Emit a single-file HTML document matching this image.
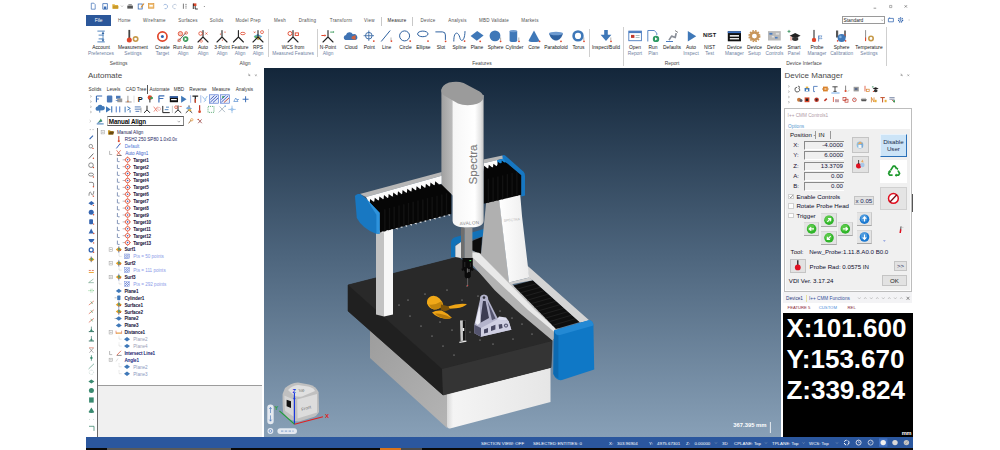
<!DOCTYPE html>
<html lang="en"><head><meta charset="utf-8"><title>Verisurf</title>
<style>
html,body{margin:0;padding:0;background:#fff;}
body{width:1000px;height:450px;overflow:hidden;position:relative;font-family:"Liberation Sans",sans-serif;color:#2a2a2a;}
.a{position:absolute;white-space:nowrap;}
.t{position:absolute;white-space:nowrap;line-height:1;transform:translate(-50%,-50%);text-align:center;}
.l{position:absolute;white-space:nowrap;line-height:1;transform:translate(0,-50%);}
.r{position:absolute;white-space:nowrap;line-height:1;transform:translate(-100%,-50%);}
svg{position:absolute;overflow:visible;}
</style></head>
<body>
<svg style="left:0px;top:0px" width="1000" height="14" viewBox="0 0 1000 14"><path d="M91.3 3.2h2.6l1.3 1.4v4.6h-3.9z" fill="none" stroke="#3b6db5" stroke-width=".7"/><path d="M102.8 3.6h4.6v5.6h-4.600z" fill="none" stroke="#3b6db5" stroke-width=".8"/><rect x="103.9" y="6.5" width="2.4" height="2.5" fill="#3b6db5"/><path d="M112.3 4.2h2.2l.6.8h2.9v3.8h-5.7z" fill="#e3b341"/><rect x="113" y="5.8" width="5.4" height="2.8" fill="#c99a2a"/><path d="M121 5.6l1 1 1-1" fill="none" stroke="#777" stroke-width=".5"/><rect x="127.3" y="5.6" width="5.6" height="3" fill="#555"/><rect x="128.4" y="4" width="3.4" height="1.8" fill="#999"/><rect x="138.2" y="4" width="4" height="5" fill="none" stroke="#3b6db5" stroke-width=".8"/><path d="M141 7.5l3-4" stroke="#e08a1e" stroke-width="1.1"/><rect x="148.3" y="3.6" width="5.6" height="4.6" fill="#f0c27a" stroke="#d98c2b" stroke-width=".6"/><rect x="149.4" y="5" width="3.4" height="1.6" fill="#fff"/><path d="M163.6 5.2a2.2 2.2 0 1 1 1 3.4" fill="none" stroke="#9db7dc" stroke-width=".9"/><path d="M176.6 5.2a2.2 2.2 0 1 0 -1 3.4" fill="none" stroke="#b9c6da" stroke-width=".9"/><path d="M183.4 3.6v5.2M185.4 4.4h1.2M185.4 6.2h1.2M185.4 8h1.2" stroke="#444" stroke-width=".7"/><rect x="193" y="3.4" width="3.4" height="2.6" fill="#d9482b"/><path d="M193.3 3.6v5.4M195.2 6v3h2.6" stroke="#222" stroke-width=".9" fill="none"/><circle cx="204.3" cy="6.6" r=".5" fill="#666"/></svg>
<svg style="left:0px;top:0px" width="1000" height="14" viewBox="0 0 1000 14"><path d="M873.6 8.2h2.6" stroke="#555" stroke-width=".6"/><path d="M889.6 5.4h2.2v2.2h-2.2z" fill="none" stroke="#666" stroke-width=".5"/><path d="M904.6 5.2l2.4 2.4M907 5.2l-2.4 2.4" stroke="#555" stroke-width=".6"/></svg>
<div class="a" style="left:86px;top:15px;width:25px;height:11px;background:#2b579a;"></div>
<div class="t" style="left:98.6px;top:21.2px;font-size:4.9px;color:#fff;">File</div>
<div class="t" style="left:124.4px;top:21.2px;font-size:4.5px;color:#505050;letter-spacing:.22px;">Home</div>
<div class="t" style="left:154.4px;top:21.2px;font-size:4.5px;color:#505050;letter-spacing:.22px;">Wireframe</div>
<div class="t" style="left:188px;top:21.2px;font-size:4.5px;color:#505050;letter-spacing:.22px;">Surfaces</div>
<div class="t" style="left:216.6px;top:21.2px;font-size:4.5px;color:#505050;letter-spacing:.22px;">Solids</div>
<div class="t" style="left:248px;top:21.2px;font-size:4.5px;color:#505050;letter-spacing:.22px;">Model Prep</div>
<div class="t" style="left:280px;top:21.2px;font-size:4.5px;color:#505050;letter-spacing:.22px;">Mesh</div>
<div class="t" style="left:307.5px;top:21.2px;font-size:4.5px;color:#505050;letter-spacing:.22px;">Drafting</div>
<div class="t" style="left:341px;top:21.2px;font-size:4.5px;color:#505050;letter-spacing:.22px;">Transform</div>
<div class="t" style="left:369.4px;top:21.2px;font-size:4.5px;color:#505050;letter-spacing:.22px;">View</div>
<div class="t" style="left:397px;top:21.2px;font-size:4.5px;color:#222;letter-spacing:.22px;">Measure</div>
<div class="t" style="left:428px;top:21.2px;font-size:4.5px;color:#505050;letter-spacing:.22px;">Device</div>
<div class="t" style="left:457.5px;top:21.2px;font-size:4.5px;color:#505050;letter-spacing:.22px;">Analysis</div>
<div class="t" style="left:494px;top:21.2px;font-size:4.5px;color:#505050;letter-spacing:.22px;">MBD Validate</div>
<div class="t" style="left:530px;top:21.2px;font-size:4.5px;color:#505050;letter-spacing:.22px;">Markets</div>
<div class="a" style="left:381.4px;top:16.5px;width:0.6px;height:9.5px;background:#c8c8c8;"></div>
<div class="a" style="left:412.2px;top:16.5px;width:0.6px;height:9.5px;background:#c8c8c8;"></div>
<div class="a" style="left:842px;top:16.2px;width:43px;height:7.6px;background:#fff;border:.6px solid #9a9a9a;box-sizing:border-box;"></div>
<div class="l" style="left:843.4px;top:20.8px;font-size:4.9px;color:#222;">Standard</div>
<svg style="left:0px;top:0px" width="1000" height="30" viewBox="0 0 1000 30"><path d="M881.3 19.6l.9 1 .9-1" fill="none" stroke="#666" stroke-width=".5"/><path d="M888.4 18.4h5v3.4h-5zM889.6 18.4v-1" fill="none" stroke="#3b6db5" stroke-width=".8"/><circle cx="900.6" cy="20" r="2" fill="none" stroke="#2f62ad" stroke-width="1.4" stroke-dasharray="1 .6"/><circle cx="900.6" cy="20" r=".7" fill="#2f62ad"/><path d="M908.4 20h1.6" stroke="#aaa" stroke-width=".5"/></svg>
<div class="a" style="left:268px;top:29px;width:0.6px;height:28px;background:#cfcfcf;"></div>
<div class="a" style="left:316.6px;top:29px;width:0.6px;height:28px;background:#cfcfcf;"></div>
<div class="a" style="left:588.6px;top:29px;width:0.6px;height:28px;background:#cfcfcf;"></div>
<div class="a" style="left:623.4px;top:27px;width:0.6px;height:38.5px;background:#cfcfcf;"></div>
<div class="a" style="left:886.4px;top:27px;width:0.6px;height:38.5px;background:#cfcfcf;"></div>
<svg style="left:0px;top:0px" width="1000" height="60" viewBox="0 0 1000 60"><path d="M97.4 31.1h7.4M97.4 41.9h7.4M98.6 35.1h5M98.6 38.9h5" stroke="#3f78b8" stroke-width=".9"/><path d="M103 31.5v10" stroke="#3f78b8" stroke-width=".8"/><path d="M101.6 33.9l1.4-2 1.4 2zM101.6 39.5l1.4 2 1.4-2z" fill="#2f62a0"/><rect x="128.4" y="29.9" width="1.8" height="9" fill="#444"/><circle cx="129.3" cy="40.1" r="2.5" fill="#e0452a"/><circle cx="135.6" cy="39.1" r="2.2" fill="none" stroke="#c69a4a" stroke-width="1.6"/><circle cx="162.4" cy="36.5" r="4.6" fill="#fff" stroke="#e0452a" stroke-width="1.7"/><circle cx="162.4" cy="36.5" r="1.5" fill="#2f62ad"/><path d="M178 41.5L186 32.5" stroke="#555" stroke-width=".9"/><circle cx="180.4" cy="33.7" r="2.2" fill="#f4c7bd" stroke="#e0452a" stroke-width=".8"/><circle cx="186.2" cy="32.9" r="1.3" fill="none" stroke="#e0452a" stroke-width=".7"/><circle cx="185.6" cy="39.1" r="2.8" fill="#3a9a5a"/><path d="M184.6 37.5v3.2l2.6-1.6z" fill="#fff"/><circle cx="179.2" cy="40.3" r="1.3" fill="none" stroke="#e0452a" stroke-width=".7"/><path d="M203 30.5V37.0M203 37.0L198 42.0M203 37.0L208 42.0" stroke="#222" stroke-width="1.1" fill="none" stroke-linecap="round"/><circle cx="200.6" cy="33.5" r="1.8" fill="none" stroke="#e0452a" stroke-width=".8"/><path d="M205.4 32.5l2 2M207.4 32.5l-2 2" stroke="#e0452a" stroke-width=".7"/><circle cx="201.2" cy="41.1" r="1.2" fill="none" stroke="#e0452a" stroke-width=".6"/><path d="M222 30.5V37.0M222 37.0L217 42.0M222 37.0L227 42.0" stroke="#222" stroke-width="1.1" fill="none" stroke-linecap="round"/><circle cx="225" cy="32.1" r="0.7" fill="#e0452a"/><circle cx="220.4" cy="34.1" r="0.6" fill="#e0452a"/><circle cx="222.4" cy="40.1" r="0.6" fill="#e0452a"/><path d="M238.4 30.5V37.0M238.4 37.0L233.4 42.0M238.4 37.0L243.4 42.0" stroke="#222" stroke-width="1.1" fill="none" stroke-linecap="round"/><ellipse cx="242.8" cy="33.5" rx="2.4" ry="1.2" fill="none" stroke="#e0452a" stroke-width=".8"/><path d="M253.6 36.5l4-2.6 4.6 2.4-4.2 4z" fill="#5aa7d8"/><path d="M256 37.5l3-1.4 2 2.4-3 1.4z" fill="#e8b13a"/><path d="M254.6 35.5l2 .6.4 2-2.2.2z" fill="#63b35d"/><path d="M258 30.5V37.0M258 37.0L253 42.0M258 37.0L263 42.0" stroke="#222" stroke-width="1.1" fill="none" stroke-linecap="round"/><circle cx="262" cy="32.1" r="1.5" fill="none" stroke="#e0452a" stroke-width=".7"/><path d="M253.8 31.5l1.6 1.6M255.4 31.5l-1.6 1.6" stroke="#e0452a" stroke-width=".6"/><path d="M293 30.5V37.0M293 37.0L288 42.0M293 37.0L298 42.0" stroke="#222" stroke-width="1.1" fill="none" stroke-linecap="round"/><circle cx="290" cy="33.5" r="2" fill="none" stroke="#e0452a" stroke-width=".9"/><rect x="295.2" y="32.9" width="3.2" height="2.6" fill="none" stroke="#e0452a" stroke-width=".9"/><path d="M328 30.5V37.0M328 37.0L323 42.0M328 37.0L333 42.0" stroke="#222" stroke-width="1.1" fill="none" stroke-linecap="round"/><path d="M321.4 35.5h3.4" stroke="#e0452a" stroke-width="1"/><path d="M324.6 34.3l1.6 1.2-1.6 1.2z" fill="#e0452a"/><path d="M330.2 32.1h3" stroke="#3a9a5a" stroke-width=".9"/><path d="M333 31.1l1.4 1-1.4 1z" fill="#3a9a5a"/><path d="M345.4 40.1a2.6 2.6 0 0 1 .6-5 3.6 3.6 0 0 1 6.8-.8 3 3 0 0 1 2.6 5.8z" fill="#3f73b3"/><path d="M351.6 36.7l4-1.6v5l-4-1.4z" fill="#d0623f"/><circle cx="368.79999999999995" cy="35.7" r="3.3" fill="none" stroke="#2f62a0" stroke-width=".9"/><path d="M368.79999999999995 30.5v10.4M363.59999999999997 35.7h10.4" stroke="#2f62a0" stroke-width=".8"/><circle cx="373.79999999999995" cy="41.1" r="0.9" fill="#e0452a"/><path d="M381.20000000000005 41.5L390.20000000000005 30.5" stroke="#2f62a0" stroke-width="1"/><path d="M391.0 37.5v3" stroke="#666" stroke-width=".5"/><circle cx="391.40000000000003" cy="41.1" r="0.9" fill="#e0452a"/><circle cx="404.59999999999997" cy="35.9" r="5" fill="none" stroke="#2f62a0" stroke-width="1"/><circle cx="410.2" cy="41.1" r="0.9" fill="#e0452a"/><ellipse cx="422.79999999999995" cy="33.9" rx="5.2" ry="2.8" fill="none" stroke="#2f62a0" stroke-width="1"/><circle cx="428.0" cy="41.1" r="0.9" fill="#e0452a"/><path d="M435.4 31.9h7a3 3 0 0 1 3 3v5" fill="none" stroke="#2f62a0" stroke-width="1"/><circle cx="445.6" cy="41.3" r="0.9" fill="#e0452a"/><path d="M453.79999999999995 41.5c0-12 5-9 6-4s5 4 5.2-6.4" fill="none" stroke="#2f62a0" stroke-width="1"/><circle cx="464.59999999999997" cy="41.1" r="0.9" fill="#e0452a"/><path d="M470.6 36.1l6.6-5.2 6.4 4.6-6.8 5.2z" fill="#3f78b8"/><circle cx="480.2" cy="41.3" r="0.9" fill="#e0452a"/><circle cx="495.0" cy="35.9" r="5.4" fill="#3f78b8"/><path d="M500.6 37.5v3" stroke="#666" stroke-width=".5"/><circle cx="500.6" cy="41.3" r="0.9" fill="#e0452a"/><path d="M509.59999999999997 31.1h7.6v9.6a3.8 1.4 0 0 1-7.6 0z" fill="#3f78b8"/><ellipse cx="513.4" cy="31.1" rx="3.8" ry="1.2" fill="#6e9bd0"/><path d="M518.8 37.5v3" stroke="#666" stroke-width=".5"/><circle cx="519.0" cy="41.3" r="0.9" fill="#e0452a"/><path d="M534 30.5l5.4 10a5.4 1.6 0 0 1-10.8 0z" fill="#3f78b8"/><circle cx="539.6" cy="41.3" r="0.9" fill="#e0452a"/><path d="M549 33.5c2 6 5 7 7 7s5-1 7-7z" fill="#2f62a0"/><ellipse cx="556" cy="33.5" rx="7" ry="1.7" fill="#6e9bd0"/><circle cx="561" cy="41.3" r="0.9" fill="#e0452a"/><circle cx="578.0" cy="35.9" r="4.4" fill="none" stroke="#3f78b8" stroke-width="2.6"/><path d="M583.8 37.5v3" stroke="#666" stroke-width=".5"/><circle cx="584.0" cy="41.3" r="0.9" fill="#e0452a"/><path d="M604.2 30.1h3.6v4.6h3.6l-5.4 6.4-5.4-6.4h3.6z" fill="#3f78b8"/><path d="M610.8 37.5v3" stroke="#666" stroke-width=".5"/><circle cx="611" cy="41.3" r="0.9" fill="#e0452a"/><rect x="628.8" y="31.1" width="12.6" height="9.6" fill="#fff" stroke="#4a7cc0" stroke-width=".9"/><rect x="628.8" y="31.1" width="12.6" height="2" fill="#4a7cc0"/><rect x="631" y="34.9" width="3.4" height="3" fill="#c0392b"/><path d="M635.6 35.5h4M635.6 37.5h4" stroke="#8aa" stroke-width=".7"/><path d="M647.8 41.5v-11h6.4l2.6 2.6v2" fill="none" stroke="#4a7cc0" stroke-width=".9"/><circle cx="656" cy="38.9" r="3.2" fill="#2e9a63"/><path d="M655 37.3v3.2l2.6-1.6z" fill="#fff"/><path d="M666 41.5h7" stroke="#4a7cc0" stroke-width="1"/><path d="M669 40.1l2.6-4 3.6 1.4 1-4.4" fill="none" stroke="#8a8f98" stroke-width="1.7" stroke-linejoin="round"/><path d="M675 30.5l3 2" stroke="#666" stroke-width=".8"/><path d="M687.8 30.9v10.6l8.4-5.3z" fill="#3f78b8"/><text x="709.6" y="36.9" font-size="5.6" font-weight="bold" text-anchor="middle" fill="#111" font-family="Liberation Sans,sans-serif" textLength="13">NIST</text><rect x="727.8" y="31.3" width="13.2" height="10" fill="#111"/><rect x="727.8" y="31.3" width="13.2" height="1.8" fill="#3a6fc0"/><rect x="729.8" y="35.1" width="9.2" height="1.5" fill="#fff"/><rect x="729.8" y="38.1" width="9.2" height="1.3" fill="#fff"/><circle cx="754.4" cy="36.1" r="3.7" fill="none" stroke="#c8965a" stroke-width="2.5"/><circle cx="754.4" cy="36.1" r="5.3" fill="none" stroke="#c8965a" stroke-width="1.5" stroke-dasharray="1.7 1.07"/><rect x="768.0" y="31.1" width="12.8" height="9.4" fill="#b9b9b9"/><rect x="769.4" y="32.9" width="3" height="1.8" fill="#4a7cc0"/><rect x="775.8" y="32.9" width="3.4" height="1.8" fill="#ddd"/><rect x="771.8" y="35.9" width="2.4" height="1.6" fill="#ddd"/><rect x="775.0" y="36.9" width="2.6" height="1.6" fill="#4a7cc0"/><path d="M789 29.9v3M787.5 31.4h3" stroke="#2e8b57" stroke-width=".8"/><path d="M789.6 35.7l5.6-2.6 5.4 2.6-5.4 2.6z" fill="#222"/><path d="M792.2 37.3v2.6c2 1.4 4 1.4 6 0v-2.6" fill="#333"/><path d="M791 36.5v4" stroke="#e0452a" stroke-width=".7"/><rect x="813.4" y="29.9" width="1.2" height="9" fill="#444"/><circle cx="814" cy="39.9" r="2.2" fill="#e0452a"/><path d="M818.6 35.5v6" stroke="#4a7cc0" stroke-width=".8"/><path d="M819 35.9h3l-1 1.4 1 1.4h-3z" fill="none" stroke="#4a7cc0" stroke-width=".6"/><rect x="836.0" y="30.5" width="2.2" height="7" fill="#555"/><rect x="844.2" y="30.5" width="1.6" height="7" fill="#555"/><circle cx="841.6" cy="38.1" r="4" fill="#3f78b8"/><circle cx="840.4" cy="36.9" r="1.3" fill="#7fb0e0"/><circle cx="837.6" cy="40.9" r="0.8" fill="#e0452a"/><circle cx="845.6" cy="40.9" r="0.8" fill="#e0452a"/><circle cx="845.0" cy="34.9" r="0.7" fill="#e0452a"/><rect x="865" y="30.1" width="1.1" height="9.6" fill="#999"/><rect x="865" y="37.5" width="1.1" height="3.6" fill="#e0452a"/><circle cx="871" cy="38.5" r="2.2" fill="none" stroke="#c69a4a" stroke-width="1.6"/></svg>
<div class="t" style="left:101px;top:47.9px;font-size:4.9px;color:#151515;">Account</div>
<div class="t" style="left:101px;top:53.8px;font-size:4.8px;color:#6f7fa2;">Preferences</div>
<div class="t" style="left:133px;top:47.9px;font-size:4.9px;color:#151515;">Measurement</div>
<div class="t" style="left:133px;top:53.8px;font-size:4.8px;color:#6f7fa2;">Settings</div>
<div class="t" style="left:162.4px;top:47.9px;font-size:4.9px;color:#151515;">Create</div>
<div class="t" style="left:162.4px;top:53.8px;font-size:4.8px;color:#6f7fa2;">Target</div>
<div class="t" style="left:183px;top:47.9px;font-size:4.9px;color:#151515;">Run Auto</div>
<div class="t" style="left:183px;top:53.8px;font-size:4.8px;color:#6f7fa2;">Align</div>
<div class="t" style="left:203px;top:47.9px;font-size:4.9px;color:#151515;">Auto</div>
<div class="t" style="left:203px;top:53.8px;font-size:4.8px;color:#6f7fa2;">Align</div>
<div class="t" style="left:222px;top:47.9px;font-size:4.9px;color:#151515;">3-Point</div>
<div class="t" style="left:222px;top:53.8px;font-size:4.8px;color:#6f7fa2;">Align</div>
<div class="t" style="left:240px;top:47.9px;font-size:4.9px;color:#151515;">Feature</div>
<div class="t" style="left:240px;top:53.8px;font-size:4.8px;color:#6f7fa2;">Align</div>
<div class="t" style="left:258px;top:47.9px;font-size:4.9px;color:#151515;">RPS</div>
<div class="t" style="left:258px;top:53.8px;font-size:4.8px;color:#6f7fa2;">Align</div>
<div class="t" style="left:293px;top:47.9px;font-size:4.9px;color:#151515;">WCS from</div>
<div class="t" style="left:293px;top:53.8px;font-size:4.8px;color:#6f7fa2;">Measured Features</div>
<div class="t" style="left:328px;top:47.9px;font-size:4.9px;color:#151515;">N-Point</div>
<div class="t" style="left:328px;top:53.8px;font-size:4.8px;color:#6f7fa2;">Align</div>
<div class="t" style="left:351px;top:47.9px;font-size:4.9px;color:#151515;">Cloud</div>
<div class="t" style="left:369.4px;top:47.9px;font-size:4.9px;color:#151515;">Point</div>
<div class="t" style="left:386.6px;top:47.9px;font-size:4.9px;color:#151515;">Line</div>
<div class="t" style="left:405.4px;top:47.9px;font-size:4.9px;color:#151515;">Circle</div>
<div class="t" style="left:423.4px;top:47.9px;font-size:4.9px;color:#151515;">Ellipse</div>
<div class="t" style="left:441px;top:47.9px;font-size:4.9px;color:#151515;">Slot</div>
<div class="t" style="left:459.4px;top:47.9px;font-size:4.9px;color:#151515;">Spline</div>
<div class="t" style="left:477px;top:47.9px;font-size:4.9px;color:#151515;">Plane</div>
<div class="t" style="left:495.6px;top:47.9px;font-size:4.9px;color:#151515;">Sphere</div>
<div class="t" style="left:514.4px;top:47.9px;font-size:4.9px;color:#151515;">Cylinder</div>
<div class="t" style="left:534px;top:47.9px;font-size:4.9px;color:#151515;">Cone</div>
<div class="t" style="left:556px;top:47.9px;font-size:4.9px;color:#151515;">Paraboloid</div>
<div class="t" style="left:578.4px;top:47.9px;font-size:4.9px;color:#151515;">Torus</div>
<div class="t" style="left:606px;top:47.9px;font-size:4.9px;color:#151515;">Inspect/Build</div>
<div class="t" style="left:635px;top:47.9px;font-size:4.9px;color:#151515;">Open</div>
<div class="t" style="left:635px;top:53.8px;font-size:4.8px;color:#6f7fa2;">Report</div>
<div class="t" style="left:653px;top:47.9px;font-size:4.9px;color:#151515;">Run</div>
<div class="t" style="left:653px;top:53.8px;font-size:4.8px;color:#6f7fa2;">Plan</div>
<div class="t" style="left:672px;top:47.9px;font-size:4.9px;color:#151515;">Defaults</div>
<div class="t" style="left:691px;top:47.9px;font-size:4.9px;color:#151515;">Auto</div>
<div class="t" style="left:691px;top:53.8px;font-size:4.8px;color:#6f7fa2;">Inspect</div>
<div class="t" style="left:709.6px;top:47.9px;font-size:4.9px;color:#151515;">NIST</div>
<div class="t" style="left:709.6px;top:53.8px;font-size:4.8px;color:#6f7fa2;">Test</div>
<div class="t" style="left:734.4px;top:47.9px;font-size:4.9px;color:#151515;">Device</div>
<div class="t" style="left:734.4px;top:53.8px;font-size:4.8px;color:#6f7fa2;">Manager</div>
<div class="t" style="left:754.4px;top:47.9px;font-size:4.9px;color:#151515;">Device</div>
<div class="t" style="left:754.4px;top:53.8px;font-size:4.8px;color:#6f7fa2;">Setup</div>
<div class="t" style="left:774.4px;top:47.9px;font-size:4.9px;color:#151515;">Device</div>
<div class="t" style="left:774.4px;top:53.8px;font-size:4.8px;color:#6f7fa2;">Controls</div>
<div class="t" style="left:794px;top:47.9px;font-size:4.9px;color:#151515;">Smart</div>
<div class="t" style="left:794px;top:53.8px;font-size:4.8px;color:#6f7fa2;">Panel</div>
<div class="t" style="left:817px;top:47.9px;font-size:4.9px;color:#151515;">Probe</div>
<div class="t" style="left:817px;top:53.8px;font-size:4.8px;color:#6f7fa2;">Manager</div>
<div class="t" style="left:841.6px;top:47.9px;font-size:4.9px;color:#151515;">Sphere</div>
<div class="t" style="left:841.6px;top:53.8px;font-size:4.8px;color:#6f7fa2;">Calibration</div>
<div class="t" style="left:869px;top:47.9px;font-size:4.9px;color:#151515;">Temperature</div>
<div class="t" style="left:869px;top:53.8px;font-size:4.8px;color:#6f7fa2;">Settings</div>
<div class="t" style="left:118.6px;top:63.8px;font-size:4.9px;color:#444;">Settings</div>
<div class="t" style="left:245px;top:63.8px;font-size:4.9px;color:#444;">Align</div>
<div class="t" style="left:482px;top:63.8px;font-size:4.9px;color:#444;">Features</div>
<div class="t" style="left:672px;top:63.8px;font-size:4.9px;color:#444;">Report</div>
<div class="t" style="left:804px;top:63.8px;font-size:4.9px;color:#444;">Device Interface</div>
<div class="l" style="left:88px;top:76.2px;font-size:8px;color:#4a4a4a;">Automate</div>
<svg style="left:0px;top:0px" width="1000" height="100" viewBox="0 0 1000 100"><path d="M248.6 73.6l1.2 2.6M248 75.2h2.4" stroke="#777" stroke-width=".5"/><path d="M255 74.4l1.8 1.8M256.8 74.4l-1.8 1.8" stroke="#777" stroke-width=".5"/></svg>
<div class="t" style="left:95px;top:90.2px;font-size:4.7px;color:#333;">Solids</div>
<div class="t" style="left:113.6px;top:90.2px;font-size:4.7px;color:#333;">Levels</div>
<div class="t" style="left:136px;top:90.2px;font-size:4.7px;color:#333;">CAD Tree</div>
<div class="t" style="left:159.6px;top:90.2px;font-size:4.7px;color:#333;">Automate</div>
<div class="t" style="left:179px;top:90.2px;font-size:4.7px;color:#333;">MBD</div>
<div class="t" style="left:198px;top:90.2px;font-size:4.7px;color:#333;">Reverse</div>
<div class="t" style="left:221px;top:90.2px;font-size:4.7px;color:#333;">Measure</div>
<div class="t" style="left:244.4px;top:90.2px;font-size:4.7px;color:#333;">Analysis</div>
<div class="a" style="left:147.4px;top:85px;width:0.7px;height:9.4px;background:#555;"></div>
<svg style="left:0px;top:0px" width="1000" height="130" viewBox="0 0 1000 130"><path d="M90 95.4l1.6 1-1.6 1M90 100.6l1.6 1-1.6 1" stroke="#8a8a8a" stroke-width=".45" fill="none"/><g transform="translate(99.3 99) scale(1.24) translate(-99.3 -99)"><path d="M97 96.6h4.6M97 96.6v5M97 99h2" fill="none" stroke="#3b6db5" stroke-width=".9"/></g><g transform="translate(109.6 99) scale(1.24) translate(-109.6 -99)"><rect x="107.4" y="96.2" width="4.4" height="5.6" rx=".8" fill="#4a78b8"/></g><g transform="translate(119 99) scale(1.24) translate(-119 -99)"><rect x="116.6" y="96.4" width="3.6" height="2.4" fill="#4a78b8"/><rect x="117.6" y="98.6" width="4" height="3" fill="#999"/><path d="M116.4 100.2h2" stroke="#4a78b8" stroke-width=".6"/></g><g transform="translate(128.4 99) scale(1.24) translate(-128.4 -99)"><path d="M128 96.4v4.4M126 101.4h5" stroke="#8a8a8a" stroke-width=".7"/><circle cx="128" cy="101" r=".7" fill="#c97b4a"/></g><path d="M134 95.6v7" stroke="#bbb" stroke-width=".5"/><g transform="translate(140.4 99) scale(1.24) translate(-140.4 -99)"><text x="138.2" y="101.4" font-size="6" font-weight="bold" fill="#111" font-family="Liberation Sans,sans-serif">P</text></g><g transform="translate(150.5 99) scale(1.24) translate(-150.5 -99)"><circle cx="150" cy="97.8" r="1.8" fill="#d9482b"/><circle cx="151.4" cy="98.2" r="1.1" fill="#3a9a5a"/><path d="M150 99v2.8" stroke="#222" stroke-width=".8"/></g><g transform="translate(161.4 99) scale(1.24) translate(-161.4 -99)"><path d="M159.4 96.4h4.4M159.4 96.4v5.4M159.4 98.6h3.6" fill="none" stroke="#3b6db5" stroke-width="1"/></g><g transform="translate(173.9 99) scale(1.24) translate(-173.9 -99)"><rect x="170.6" y="96.8" width="6.6" height="4.8" fill="#111"/><rect x="170.6" y="96.8" width="6.6" height="1.2" fill="#3a6fc0"/><rect x="171.6" y="99" width="4.6" height="1" fill="#fff"/></g><g transform="translate(183.6 99) scale(1.24) translate(-183.6 -99)"><path d="M181.6 96.4v5.6l4.4-2.8z" fill="#3f78b8"/></g><path d="M190.6 95.2v7.6" stroke="#4a78d0" stroke-width=".5"/><g transform="translate(195.3 99) scale(1.24) translate(-195.3 -99)"><path d="M193 96.6h4.6M195.3 96.6v5.2" stroke="#222" stroke-width="1"/><path d="M195.3 99v3" stroke="#d9482b" stroke-width="1"/></g><path d="M200.8 95.2v7.6" stroke="#4a78d0" stroke-width=".5"/><g transform="translate(205 99) scale(1.24) translate(-205 -99)"><path d="M203 97l2 2.6 1.8-3M204 101.2l2-1.4" stroke="#8ab8e6" stroke-width=".7" fill="none"/></g><g transform="translate(213.9 99) scale(1.24) translate(-213.9 -99)"><rect x="210.2" y="95.6" width="7.4" height="6.8" fill="#e8eef8" stroke="#4a6fd0" stroke-width=".5"/><path d="M211 101.6l5.6-5.2M211 99.4l3.4-3.2M213.2 101.8l4-3.6" stroke="#3050c0" stroke-width=".7"/></g><g transform="translate(224.9 99) scale(1.24) translate(-224.9 -99)"><rect x="221.2" y="95.6" width="7.4" height="6.8" fill="#e8eef8" stroke="#4a6fd0" stroke-width=".5"/><path d="M222 101.6l5.6-5.2M222 99.4l3.4-3.2" stroke="#3050c0" stroke-width=".7"/><path d="M224.2 101.8l4-3.6" stroke="#c0392b" stroke-width=".7"/><circle cx="223.4" cy="97.4" r=".8" fill="#3a9a5a"/></g><g transform="translate(236 99) scale(1.24) translate(-236 -99)"><path d="M234.2 101l1.6-2.8 1.8 2.8zM236.8 99.4h1.6" fill="none" stroke="#5a8fd0" stroke-width=".6"/></g><g transform="translate(245.6 99) scale(1.24) translate(-245.6 -99)"><path d="M245.6 96.8v4.8M243.2 99.2h4.8" stroke="#3b6db5" stroke-width=".8"/></g><path d="M90 105.80000000000001l1.6 1-1.6 1M90 111.0l1.6 1-1.6 1" stroke="#8a8a8a" stroke-width=".45" fill="none"/><g transform="translate(100 109.4) scale(1.24) translate(-100 -109.4)"><path d="M97.4 110.4a1.8 1.8 0 0 1 .6-3.4 2.2 2.2 0 0 1 4-.2 1.6 1.6 0 0 1 .6 3.2z" fill="#3f78b8"/><path d="M99.8 109v3" stroke="#3f78b8" stroke-width=".8"/></g><g transform="translate(109 109.4) scale(1.24) translate(-109 -109.4)"><path d="M106.6 106.8v5.2l3.8-2.6z" fill="#3f78b8"/><path d="M111.2 106.8v5.2" stroke="#3f78b8" stroke-width=".9"/></g><g transform="translate(118 109.4) scale(1.24) translate(-118 -109.4)"><path d="M116.6 107v4.8M119.4 107v4.8" stroke="#4a78c8" stroke-width=".8"/></g><g transform="translate(127.6 109.4) scale(1.24) translate(-127.6 -109.4)"><path d="M125.6 107.2v4.6M127.4 107.2l2.4 1.4-2.4 1.4M129.6 110v2" stroke="#3f78b8" stroke-width=".8" fill="none"/></g><g transform="translate(138 109.4) scale(1.24) translate(-138 -109.4)"><path d="M135.4 107.4h4.8M135.4 109.2h4.8M136 111h3" stroke="#5a80b8" stroke-width=".8"/><path d="M140.4 108v4" stroke="#888" stroke-width=".6"/></g><g transform="translate(147 109.4) scale(1.24) translate(-147 -109.4)"><path d="M147 106.4v3.4l-2.4 2.4M147 109.8l2.4 2.4" stroke="#222" stroke-width=".8" fill="none"/></g><g transform="translate(156.4 109.4) scale(1.24) translate(-156.4 -109.4)"><path d="M154.2 107.2l3 4M157.4 107.2l-3 4" stroke="#e87a6a" stroke-width=".7"/><circle cx="158.6" cy="109" r="1.2" fill="none" stroke="#e8a09a" stroke-width=".5"/></g><g transform="translate(166 109.4) scale(1.24) translate(-166 -109.4)"><path d="M163.4 106.6v5.4h5.6" stroke="#222" stroke-width=".8" fill="none"/><path d="M165 109.6h3M166 107.6h2.4" stroke="#3f78b8" stroke-width=".7"/></g><path d="M172.4 105.8v7.2" stroke="#999" stroke-width=".5"/><g transform="translate(178 109.4) scale(1.24) translate(-178 -109.4)"><path d="M178 106.2v3.6l-2.6 2.4M178 109.8l2.6 2.4" stroke="#222" stroke-width=".8" fill="none"/><circle cx="176.4" cy="107.6" r="1.1" fill="none" stroke="#d9482b" stroke-width=".6"/><path d="M179.2 107h1.8" stroke="#d9482b" stroke-width=".6"/></g><g transform="translate(189 109.4) scale(1.24) translate(-189 -109.4)"><path d="M189 106.2v3.6l-2.6 2.4M189 109.8l2.6 2.4" stroke="#444" stroke-width=".8" fill="none"/><path d="M186.4 108.4l2-1.4 3 1.6-2.2 1.6z" fill="#7aa8d8"/><path d="M188 109.6l2-.8 1 1.4-1.6.8z" fill="#e8b13a"/></g><g transform="translate(199.6 109.4) scale(1.24) translate(-199.6 -109.4)"><path d="M199.6 106v4.4" stroke="#c0392b" stroke-width="1"/><circle cx="199.6" cy="111.2" r="1.1" fill="#d9482b"/></g><g transform="translate(211 109.4) scale(1.24) translate(-211 -109.4)"><rect x="208.6" y="107" width="4.8" height="4.8" fill="none" stroke="#3a9a5a" stroke-width=".6" stroke-dasharray=".9 .7"/></g><g transform="translate(222 109.4) scale(1.24) translate(-222 -109.4)"><path d="M219.4 111.8l5-5M220 107l4.4 4.6" stroke="#9aa8b8" stroke-width=".6"/><circle cx="224.6" cy="106.8" r=".7" fill="#8ab8e6"/></g><g transform="translate(232 109.4) scale(1.24) translate(-232 -109.4)"><path d="M232 106.4v6M229 109.4h6" stroke="#8ab8e6" stroke-width=".6"/><circle cx="232" cy="109.4" r="1" fill="none" stroke="#8ab8e6" stroke-width=".5"/></g><path d="M89.6 120l1.4 1.2-1.4 1.2" stroke="#999" stroke-width=".45" fill="none"/><g transform="translate(100.2 121.6) scale(1.15) translate(-100.2 -121.6)"><path d="M97.2 123.6h6" stroke="#3f78b8" stroke-width=".9"/><path d="M98.4 122.4l2.4-3.4 1.2 2.4z" fill="#3a9a5a"/><path d="M98 122.6l4-1.4" stroke="#2f62a0" stroke-width=".6"/></g><path d="M188.6 123.4l2.6-3.4" stroke="#8a5a2a" stroke-width=".8"/><circle cx="191.8" cy="119.8" r="1.2" fill="none" stroke="#e08a1e" stroke-width=".6"/><path d="M198 119.2l3.8 4M201.6 119.4l-3.4 3.8" stroke="#8a2a2a" stroke-width=".7"/><circle cx="198.2" cy="119.4" r=".7" fill="#d9482b"/></svg>
<div class="a" style="left:107px;top:116.1px;width:76.8px;height:10.3px;background:#fff;border-top:.9px solid #5a5a5a;border-bottom:.9px solid #5a5a5a;border-left:.5px solid #bbb;border-right:.6px solid #888;box-sizing:border-box;"></div>
<div class="l" style="left:108.8px;top:121.8px;font-size:6.3px;color:#0a0a0a;font-weight:bold;letter-spacing:-.15px;">Manual Align</div>
<svg style="left:0px;top:0px" width="1000" height="130" viewBox="0 0 1000 130"><path d="M177.6 120.8l1.3 1.4 1.3-1.4" fill="none" stroke="#666" stroke-width=".5"/></svg>
<div class="a" style="left:97.4px;top:384.6px;width:164.3px;height:52.4px;background:#f0f0f0;border-top:.9px solid #9c9c9c;box-sizing:border-box;"></div>
<div class="a" style="left:97.1px;top:128px;width:0.7px;height:309px;background:#6a6a6a;"></div>
<div class="l" style="left:117px;top:133.1px;font-size:4.6px;color:#1a1a50;">Manual Align</div>
<div class="l" style="left:124.8px;top:140.0px;font-size:4.6px;color:#1a1a60;">RSH2 250 SP80 1.0x0.0x</div>
<div class="l" style="left:124.8px;top:146.9px;font-size:4.6px;color:#4a78d8;">Default</div>
<div class="l" style="left:125.2px;top:153.8px;font-size:4.6px;color:#3a62c8;">Auto Align1</div>
<div class="l" style="left:133.2px;top:160.7px;font-size:4.6px;color:#16103a;font-weight:bold;letter-spacing:-.12px;">Target1</div>
<div class="l" style="left:133.2px;top:167.6px;font-size:4.6px;color:#16103a;font-weight:bold;letter-spacing:-.12px;">Target2</div>
<div class="l" style="left:133.2px;top:174.5px;font-size:4.6px;color:#16103a;font-weight:bold;letter-spacing:-.12px;">Target3</div>
<div class="l" style="left:133.2px;top:181.4px;font-size:4.6px;color:#16103a;font-weight:bold;letter-spacing:-.12px;">Target4</div>
<div class="l" style="left:133.2px;top:188.3px;font-size:4.6px;color:#16103a;font-weight:bold;letter-spacing:-.12px;">Target5</div>
<div class="l" style="left:133.2px;top:195.2px;font-size:4.6px;color:#16103a;font-weight:bold;letter-spacing:-.12px;">Target6</div>
<div class="l" style="left:133.2px;top:202.1px;font-size:4.6px;color:#16103a;font-weight:bold;letter-spacing:-.12px;">Target7</div>
<div class="l" style="left:133.2px;top:209.0px;font-size:4.6px;color:#16103a;font-weight:bold;letter-spacing:-.12px;">Target8</div>
<div class="l" style="left:133.2px;top:215.9px;font-size:4.6px;color:#16103a;font-weight:bold;letter-spacing:-.12px;">Target9</div>
<div class="l" style="left:133.2px;top:222.8px;font-size:4.6px;color:#16103a;font-weight:bold;letter-spacing:-.12px;">Target10</div>
<div class="l" style="left:133.2px;top:229.7px;font-size:4.6px;color:#16103a;font-weight:bold;letter-spacing:-.12px;">Target11</div>
<div class="l" style="left:133.2px;top:236.6px;font-size:4.6px;color:#16103a;font-weight:bold;letter-spacing:-.12px;">Target12</div>
<div class="l" style="left:133.2px;top:243.5px;font-size:4.6px;color:#16103a;font-weight:bold;letter-spacing:-.12px;">Target13</div>
<div class="l" style="left:124.4px;top:250.4px;font-size:4.6px;color:#16103a;font-weight:bold;letter-spacing:-.12px;">Surf1</div>
<div class="l" style="left:133.3px;top:257.3px;font-size:4.6px;color:#8a9ae8;">Pts = 50 points</div>
<div class="l" style="left:124.4px;top:264.2px;font-size:4.6px;color:#16103a;font-weight:bold;letter-spacing:-.12px;">Surf2</div>
<div class="l" style="left:133.3px;top:271.1px;font-size:4.6px;color:#8a9ae8;">Pts = 111 points</div>
<div class="l" style="left:124.4px;top:278.0px;font-size:4.6px;color:#16103a;font-weight:bold;letter-spacing:-.12px;">Surf3</div>
<div class="l" style="left:133.3px;top:284.9px;font-size:4.6px;color:#8a9ae8;">Pts = 292 points</div>
<div class="l" style="left:124.4px;top:291.8px;font-size:4.6px;color:#16103a;font-weight:bold;letter-spacing:-.12px;">Plane1</div>
<div class="l" style="left:124.4px;top:298.7px;font-size:4.6px;color:#16103a;font-weight:bold;letter-spacing:-.12px;">Cylinder1</div>
<div class="l" style="left:124.4px;top:305.6px;font-size:4.6px;color:#16103a;font-weight:bold;letter-spacing:-.12px;">Surface1</div>
<div class="l" style="left:124.4px;top:312.5px;font-size:4.6px;color:#16103a;font-weight:bold;letter-spacing:-.12px;">Surface2</div>
<div class="l" style="left:124.4px;top:319.4px;font-size:4.6px;color:#16103a;font-weight:bold;letter-spacing:-.12px;">Plane2</div>
<div class="l" style="left:124.4px;top:326.3px;font-size:4.6px;color:#16103a;font-weight:bold;letter-spacing:-.12px;">Plane3</div>
<div class="l" style="left:124.4px;top:333.2px;font-size:4.6px;color:#16103a;font-weight:bold;letter-spacing:-.12px;">Distance1</div>
<div class="l" style="left:133.3px;top:340.1px;font-size:4.6px;color:#9aa0b8;">Plane2</div>
<div class="l" style="left:133.3px;top:347.0px;font-size:4.6px;color:#9aa0b8;">Plane4</div>
<div class="l" style="left:124.4px;top:353.9px;font-size:4.6px;color:#1a1a70;font-weight:bold;letter-spacing:-.12px;">Intersect Line1</div>
<div class="l" style="left:124.4px;top:360.8px;font-size:4.6px;color:#1a2a80;font-weight:bold;letter-spacing:-.12px;">Angle1</div>
<div class="l" style="left:133.3px;top:367.7px;font-size:4.6px;color:#8a98c0;">Plane2</div>
<div class="l" style="left:133.3px;top:374.6px;font-size:4.6px;color:#8a98c0;">Plane3</div>
<svg style="left:0px;top:0px" width="1000" height="450" viewBox="0 0 1000 450"><rect x="101.1" y="130.5" width="3.4" height="3.4" fill="#fff" stroke="#9a9a9a" stroke-width=".5"/><path d="M101.8 132.2h2" stroke="#555" stroke-width=".4"/><path d="M108 130.2h2l.6.8h2.6v3.4h-5.2z" fill="#c99a2a"/><path d="M108.6 134.39999999999998l1-2.8h4.6l-1 2.8z" fill="#6a4a10"/><path d="M118.8 136.1v4" stroke="#c0392b" stroke-width="1"/><circle cx="118.8" cy="141.1" r="1.1" fill="#d9482b"/><path d="M116.4 148.4l3.4-4.4" stroke="#3a62c0" stroke-width="1"/><path d="M119.6 143.4l1.4.6" stroke="#d9482b" stroke-width=".7"/><path d="M109.6 150.89999999999998v3.6h2.6" stroke="#777" stroke-width=".5" fill="none"/><path d="M116.6 150.29999999999998l4 5M120.6 150.29999999999998l-4 5" stroke="#d9482b" stroke-width=".7"/><path d="M117 155.49999999999997h4.6" stroke="#222" stroke-width=".6"/><path d="M117.4 157.79999999999998v4M118 161.6h1.6" stroke="#34508a" stroke-width=".6" fill="none"/><path d="M122.6 159.79999999999998h1.8" stroke="#555" stroke-width=".4"/><circle cx="127.6" cy="159.79999999999998" r="2.2" fill="#fff" stroke="#e0452a" stroke-width=".8"/><circle cx="127.6" cy="159.79999999999998" r=".8" fill="#3a62c0"/><path d="M124.19999999999999 159.79999999999998h1.2M129.79999999999998 159.79999999999998h1.2M127.6 156.39999999999998v1.2M127.6 161.99999999999997v1.2" stroke="#e0452a" stroke-width=".6"/><path d="M117.4 164.7v4M118 168.5h1.6" stroke="#34508a" stroke-width=".6" fill="none"/><path d="M122.6 166.7h1.8" stroke="#555" stroke-width=".4"/><circle cx="127.6" cy="166.7" r="2.2" fill="#fff" stroke="#e0452a" stroke-width=".8"/><circle cx="127.6" cy="166.7" r=".8" fill="#3a62c0"/><path d="M124.19999999999999 166.7h1.2M129.79999999999998 166.7h1.2M127.6 163.29999999999998v1.2M127.6 168.89999999999998v1.2" stroke="#e0452a" stroke-width=".6"/><path d="M117.4 171.6v4M118 175.4h1.6" stroke="#34508a" stroke-width=".6" fill="none"/><path d="M122.6 173.6h1.8" stroke="#555" stroke-width=".4"/><circle cx="127.6" cy="173.6" r="2.2" fill="#fff" stroke="#e0452a" stroke-width=".8"/><circle cx="127.6" cy="173.6" r=".8" fill="#3a62c0"/><path d="M124.19999999999999 173.6h1.2M129.79999999999998 173.6h1.2M127.6 170.2v1.2M127.6 175.79999999999998v1.2" stroke="#e0452a" stroke-width=".6"/><path d="M117.4 178.5v4M118 182.3h1.6" stroke="#34508a" stroke-width=".6" fill="none"/><path d="M122.6 180.5h1.8" stroke="#555" stroke-width=".4"/><circle cx="127.6" cy="180.5" r="2.2" fill="#fff" stroke="#e0452a" stroke-width=".8"/><circle cx="127.6" cy="180.5" r=".8" fill="#3a62c0"/><path d="M124.19999999999999 180.5h1.2M129.79999999999998 180.5h1.2M127.6 177.1v1.2M127.6 182.7v1.2" stroke="#e0452a" stroke-width=".6"/><path d="M117.4 185.39999999999998v4M118 189.2h1.6" stroke="#34508a" stroke-width=".6" fill="none"/><path d="M122.6 187.39999999999998h1.8" stroke="#555" stroke-width=".4"/><circle cx="127.6" cy="187.39999999999998" r="2.2" fill="#fff" stroke="#e0452a" stroke-width=".8"/><circle cx="127.6" cy="187.39999999999998" r=".8" fill="#3a62c0"/><path d="M124.19999999999999 187.39999999999998h1.2M129.79999999999998 187.39999999999998h1.2M127.6 183.99999999999997v1.2M127.6 189.59999999999997v1.2" stroke="#e0452a" stroke-width=".6"/><path d="M117.4 192.29999999999998v4M118 196.1h1.6" stroke="#34508a" stroke-width=".6" fill="none"/><path d="M122.6 194.29999999999998h1.8" stroke="#555" stroke-width=".4"/><circle cx="127.6" cy="194.29999999999998" r="2.2" fill="#fff" stroke="#e0452a" stroke-width=".8"/><circle cx="127.6" cy="194.29999999999998" r=".8" fill="#3a62c0"/><path d="M124.19999999999999 194.29999999999998h1.2M129.79999999999998 194.29999999999998h1.2M127.6 190.89999999999998v1.2M127.6 196.49999999999997v1.2" stroke="#e0452a" stroke-width=".6"/><path d="M117.4 199.2v4M118 203.0h1.6" stroke="#34508a" stroke-width=".6" fill="none"/><path d="M122.6 201.2h1.8" stroke="#555" stroke-width=".4"/><circle cx="127.6" cy="201.2" r="2.2" fill="#fff" stroke="#e0452a" stroke-width=".8"/><circle cx="127.6" cy="201.2" r=".8" fill="#3a62c0"/><path d="M124.19999999999999 201.2h1.2M129.79999999999998 201.2h1.2M127.6 197.79999999999998v1.2M127.6 203.39999999999998v1.2" stroke="#e0452a" stroke-width=".6"/><path d="M117.4 206.1v4M118 209.9h1.6" stroke="#34508a" stroke-width=".6" fill="none"/><path d="M122.6 208.1h1.8" stroke="#555" stroke-width=".4"/><circle cx="127.6" cy="208.1" r="2.2" fill="#fff" stroke="#e0452a" stroke-width=".8"/><circle cx="127.6" cy="208.1" r=".8" fill="#3a62c0"/><path d="M124.19999999999999 208.1h1.2M129.79999999999998 208.1h1.2M127.6 204.7v1.2M127.6 210.29999999999998v1.2" stroke="#e0452a" stroke-width=".6"/><path d="M117.4 213.0v4M118 216.8h1.6" stroke="#34508a" stroke-width=".6" fill="none"/><path d="M122.6 215.0h1.8" stroke="#555" stroke-width=".4"/><circle cx="127.6" cy="215.0" r="2.2" fill="#fff" stroke="#e0452a" stroke-width=".8"/><circle cx="127.6" cy="215.0" r=".8" fill="#3a62c0"/><path d="M124.19999999999999 215.0h1.2M129.79999999999998 215.0h1.2M127.6 211.6v1.2M127.6 217.2v1.2" stroke="#e0452a" stroke-width=".6"/><path d="M117.4 219.89999999999998v4M118 223.7h1.6" stroke="#34508a" stroke-width=".6" fill="none"/><path d="M122.6 221.89999999999998h1.8" stroke="#555" stroke-width=".4"/><circle cx="127.6" cy="221.89999999999998" r="2.2" fill="#fff" stroke="#e0452a" stroke-width=".8"/><circle cx="127.6" cy="221.89999999999998" r=".8" fill="#3a62c0"/><path d="M124.19999999999999 221.89999999999998h1.2M129.79999999999998 221.89999999999998h1.2M127.6 218.49999999999997v1.2M127.6 224.09999999999997v1.2" stroke="#e0452a" stroke-width=".6"/><path d="M117.4 226.8v4M118 230.60000000000002h1.6" stroke="#34508a" stroke-width=".6" fill="none"/><path d="M122.6 228.8h1.8" stroke="#555" stroke-width=".4"/><circle cx="127.6" cy="228.8" r="2.2" fill="#fff" stroke="#e0452a" stroke-width=".8"/><circle cx="127.6" cy="228.8" r=".8" fill="#3a62c0"/><path d="M124.19999999999999 228.8h1.2M129.79999999999998 228.8h1.2M127.6 225.4v1.2M127.6 231.0v1.2" stroke="#e0452a" stroke-width=".6"/><path d="M117.4 233.7v4M118 237.5h1.6" stroke="#34508a" stroke-width=".6" fill="none"/><path d="M122.6 235.7h1.8" stroke="#555" stroke-width=".4"/><circle cx="127.6" cy="235.7" r="2.2" fill="#fff" stroke="#e0452a" stroke-width=".8"/><circle cx="127.6" cy="235.7" r=".8" fill="#3a62c0"/><path d="M124.19999999999999 235.7h1.2M129.79999999999998 235.7h1.2M127.6 232.29999999999998v1.2M127.6 237.89999999999998v1.2" stroke="#e0452a" stroke-width=".6"/><path d="M117.4 240.6v4M118 244.4h1.6" stroke="#34508a" stroke-width=".6" fill="none"/><path d="M122.6 242.6h1.8" stroke="#555" stroke-width=".4"/><circle cx="127.6" cy="242.6" r="2.2" fill="#fff" stroke="#e0452a" stroke-width=".8"/><circle cx="127.6" cy="242.6" r=".8" fill="#3a62c0"/><path d="M124.19999999999999 242.6h1.2M129.79999999999998 242.6h1.2M127.6 239.2v1.2M127.6 244.79999999999998v1.2" stroke="#e0452a" stroke-width=".6"/><rect x="109.1" y="247.8" width="3.4" height="3.4" fill="#fff" stroke="#9a9a9a" stroke-width=".5"/><path d="M109.8 249.5h2" stroke="#555" stroke-width=".4"/><path d="M115.8 249.5l3-2.4 3 2.4-3 2.4z" fill="#e8a020"/><path d="M117.6 248.9l1.6-1 1.6 1.4-1.6 1z" fill="#58b058"/><path d="M118.8 246.1v6.8" stroke="#3a62c0" stroke-width=".6"/><circle cx="120.39999999999999" cy="250.3" r=".7" fill="#d9482b"/><path d="M119 252.99999999999997v3.4h3" stroke="#999" stroke-width=".4" fill="none" stroke-dasharray=".6 .6"/><rect x="124.6" y="253.99999999999997" width="4.8" height="4.8" fill="#eef2fb" stroke="#5a78d8" stroke-width=".4"/><path d="M125 258.4l4-4M125 256.4l2-2M127 258.4l2-2" stroke="#3050c0" stroke-width=".6"/><rect x="109.1" y="261.59999999999997" width="3.4" height="3.4" fill="#fff" stroke="#9a9a9a" stroke-width=".5"/><path d="M109.8 263.29999999999995h2" stroke="#555" stroke-width=".4"/><path d="M115.8 263.29999999999995l3-2.4 3 2.4-3 2.4z" fill="#e8a020"/><path d="M117.6 262.69999999999993l1.6-1 1.6 1.4-1.6 1z" fill="#58b058"/><path d="M118.8 259.9v6.8" stroke="#3a62c0" stroke-width=".6"/><circle cx="120.39999999999999" cy="264.09999999999997" r=".7" fill="#d9482b"/><path d="M119 266.8v3.4h3" stroke="#999" stroke-width=".4" fill="none" stroke-dasharray=".6 .6"/><rect x="124.6" y="267.8" width="4.8" height="4.8" fill="#eef2fb" stroke="#5a78d8" stroke-width=".4"/><path d="M125 272.2l4-4M125 270.2l2-2M127 272.2l2-2" stroke="#3050c0" stroke-width=".6"/><rect x="109.1" y="275.40000000000003" width="3.4" height="3.4" fill="#fff" stroke="#9a9a9a" stroke-width=".5"/><path d="M109.8 277.1h2" stroke="#555" stroke-width=".4"/><path d="M115.8 277.1l3-2.4 3 2.4-3 2.4z" fill="#e8a020"/><path d="M117.6 276.5l1.6-1 1.6 1.4-1.6 1z" fill="#58b058"/><path d="M118.8 273.70000000000005v6.8" stroke="#3a62c0" stroke-width=".6"/><circle cx="120.39999999999999" cy="277.90000000000003" r=".7" fill="#d9482b"/><path d="M119 280.6v3.4h3" stroke="#999" stroke-width=".4" fill="none" stroke-dasharray=".6 .6"/><rect x="124.6" y="281.6" width="4.8" height="4.8" fill="#eef2fb" stroke="#5a78d8" stroke-width=".4"/><path d="M125 286.0l4-4M125 284.0l2-2M127 286.0l2-2" stroke="#3050c0" stroke-width=".6"/><path d="M115.8 290.9l3-2.2 3 2.2-3 2.2z" fill="#3f78b8"/><rect x="117.2" y="295.40000000000003" width="3.2" height="4.8" rx=".8" fill="#3f78b8"/><path d="M114.6 297.8h2" stroke="#555" stroke-width=".4"/><path d="M115.8 304.7l3-2.4 3 2.4-3 2.4z" fill="#e8a020"/><path d="M117.6 304.09999999999997l1.6-1 1.6 1.4-1.6 1z" fill="#58b058"/><path d="M118.8 301.3v6.8" stroke="#3a62c0" stroke-width=".6"/><circle cx="120.39999999999999" cy="305.5" r=".7" fill="#d9482b"/><path d="M115.8 311.6l3-2.4 3 2.4-3 2.4z" fill="#e8a020"/><path d="M117.6 311.0l1.6-1 1.6 1.4-1.6 1z" fill="#58b058"/><path d="M118.8 308.20000000000005v6.8" stroke="#3a62c0" stroke-width=".6"/><circle cx="120.39999999999999" cy="312.40000000000003" r=".7" fill="#d9482b"/><path d="M115.8 318.5l3-2.2 3 2.2-3 2.2z" fill="#3f78b8"/><path d="M114.6 318.5h2" stroke="#555" stroke-width=".4"/><path d="M115.8 325.4l3-2.2 3 2.2-3 2.2z" fill="#3f78b8"/><rect x="109.1" y="330.6" width="3.4" height="3.4" fill="#fff" stroke="#9a9a9a" stroke-width=".5"/><path d="M109.8 332.3h2" stroke="#555" stroke-width=".4"/><path d="M116 333.1h5.6" stroke="#e08a1e" stroke-width="1"/><path d="M116 330.7v3M121.6 330.7v3" stroke="#d9482b" stroke-width=".5"/><path d="M119 335.8v3.4h3" stroke="#999" stroke-width=".4" fill="none" stroke-dasharray=".6 .6"/><path d="M124 339.2l3-2.2 3 2.2-3 2.2z" fill="#3f78b8"/><path d="M119 342.70000000000005v3.4h3" stroke="#999" stroke-width=".4" fill="none" stroke-dasharray=".6 .6"/><path d="M124 346.1l3-2.2 3 2.2-3 2.2z" fill="#3f78b8"/><path d="M109.6 351.0v3.6h2.6" stroke="#777" stroke-width=".5" fill="none"/><path d="M116.6 355.4l4.4-4.6" stroke="#d9482b" stroke-width=".7"/><path d="M117 355.4h4.6" stroke="#222" stroke-width=".5"/><rect x="109.1" y="358.2" width="3.4" height="3.4" fill="#fff" stroke="#9a9a9a" stroke-width=".5"/><path d="M109.8 359.9h2" stroke="#555" stroke-width=".4"/><path d="M116 361.5l2-3" stroke="#bbb" stroke-width=".5"/><path d="M119 363.40000000000003v3.4h3" stroke="#999" stroke-width=".4" fill="none" stroke-dasharray=".6 .6"/><path d="M124 366.8l3-2.2 3 2.2-3 2.2z" fill="#3f78b8"/><path d="M119 370.3v3.4h3" stroke="#999" stroke-width=".4" fill="none" stroke-dasharray=".6 .6"/><path d="M124 373.7l3-2.2 3 2.2-3 2.2z" fill="#3f78b8"/></svg>
<svg style="left:0px;top:0px" width="1000" height="450" viewBox="0 0 1000 450"><path d="M89.6 129.6h1.4M92.4 129.6h1.4" stroke="#888" stroke-width=".5"/><path d="M89.6 139.20000000000002l3.4-3.6" stroke="#3565b0" stroke-width="1.1"/><circle cx="90.80000000000001" cy="146.19000000000003" r="1.8" fill="none" stroke="#555" stroke-width=".6"/><circle cx="93.0" cy="148.39000000000001" r=".7" fill="#d9482b"/><path d="M88.80000000000001 158.58l4.6-5" stroke="#333" stroke-width=".7"/><circle cx="93.4" cy="158.18" r=".7" fill="#d9482b"/><circle cx="91.0" cy="165.17" r="2.3" fill="none" stroke="#444" stroke-width=".6"/><circle cx="93.4" cy="167.57" r=".7" fill="#d9482b"/><ellipse cx="91.0" cy="174.56" rx="2.5" ry="1.5" fill="none" stroke="#444" stroke-width=".6"/><circle cx="93.4" cy="176.96" r=".7" fill="#d9482b"/><path d="M89.0 182.35000000000002h3a1.6 1.6 0 0 1 1.6 1.6v2.4" fill="none" stroke="#444" stroke-width=".6"/><circle cx="93.4" cy="186.75000000000003" r=".7" fill="#d9482b"/><path d="M89.0 195.74c0-5 2-4 2.4-2s2 2 2.4-2.6" fill="none" stroke="#444" stroke-width=".6"/><circle cx="93.4" cy="196.14000000000001" r=".7" fill="#d9482b"/><path d="M88.4 203.13l3-2.2 3 2.2-3 2.2z" fill="#3565b0"/><circle cx="93.4" cy="205.32999999999998" r=".7" fill="#d9482b"/><circle cx="91.2" cy="212.32000000000002" r="2.5" fill="#3565b0"/><circle cx="93.60000000000001" cy="214.72" r=".7" fill="#d9482b"/><rect x="89.2" y="219.31000000000003" width="3.8" height="5" rx=".8" fill="#3565b0"/><circle cx="93.60000000000001" cy="224.11" r=".7" fill="#d9482b"/><path d="M91.2 228.5l2.6 5h-5.2z" fill="#3565b0"/><circle cx="93.80000000000001" cy="233.5" r=".7" fill="#d9482b"/><path d="M88.4 239.09c1 3 2 3.4 3 3.4s2-.4 3-3.4z" fill="#3565b0"/><circle cx="93.60000000000001" cy="242.89" r=".7" fill="#d9482b"/><circle cx="91.2" cy="249.88000000000002" r="2" fill="none" stroke="#3565b0" stroke-width="1.3"/><circle cx="93.60000000000001" cy="252.28" r=".7" fill="#d9482b"/><path d="M88.4 259.47l3-2.4 3 2.4-3 2.4z" fill="#e8a020"/><path d="M90.2 258.87l1.6-1 1.6 1.4-1.6 1z" fill="#58b058"/><path d="M91.2 256.27000000000004v6" stroke="#3a62c0" stroke-width=".6"/><path d="M88.80000000000001 270.46000000000004h2M91.80000000000001 270.46000000000004h2" stroke="#d9482b" stroke-width=".7"/><path d="M88.80000000000001 272.46000000000004h5" stroke="#e8a020" stroke-width=".9"/><path d="M88.60000000000001 282.65000000000003h5.2M88.60000000000001 282.65000000000003l4.8-3.6" stroke="#4a8a6a" stroke-width=".5" fill="none"/><path d="M88.60000000000001 290.64h5.6" stroke="#3ab04a" stroke-width=".7" stroke-dasharray=".8 .7"/><path d="M90.0 289.24h3M90.0 292.03999999999996h3" stroke="#3ab04a" stroke-width=".4" stroke-dasharray=".6 .6"/><path d="M88.80000000000001 305.03l5-4" stroke="#d9482b" stroke-width=".6"/><path d="M90.80000000000001 301.42999999999995l1.8 2.6" stroke="#3a9a5a" stroke-width=".6"/><path d="M88.80000000000001 313.82l5-4" stroke="#d9482b" stroke-width=".6"/><path d="M90.80000000000001 310.21999999999997l1.8 2.6" stroke="#3a9a5a" stroke-width=".6"/><path d="M88.80000000000001 322.4100000000001l5-4" stroke="#d9482b" stroke-width=".6"/><path d="M90.80000000000001 318.81000000000006l1.8 2.6" stroke="#3a9a5a" stroke-width=".6"/><path d="M88.80000000000001 331.6h5.2" stroke="#2a6a5a" stroke-width=".9"/><path d="M91.4 326.6v5" stroke="#2a6a5a" stroke-width=".6"/><path d="M89.80000000000001 331.20000000000005l1.6-2.4 1.6 2.4z" fill="#3a8a70"/><path d="M88.80000000000001 340.99h5.2" stroke="#2a6a5a" stroke-width=".9"/><path d="M91.4 335.99v5" stroke="#2a6a5a" stroke-width=".6"/><path d="M89.80000000000001 340.59000000000003l1.6-2.4 1.6 2.4z" fill="#3a8a70"/><path d="M89.4 347.98l4 4.8M93.4 347.98l-4 4.8" stroke="#666" stroke-width=".5"/><path d="M89.0 347.78h4.8" stroke="#d9482b" stroke-width=".5"/><path d="M91.4 355.17v5.6" stroke="#3a8a70" stroke-width=".7"/><path d="M89.80000000000001 357.97l1.6-1.4 1.6 1.4-1.6 1.4z" fill="#3a8a70"/><path d="M88.60000000000001 368.96000000000004l5.4-5.2" stroke="#3a8a70" stroke-width=".6"/><circle cx="91.4" cy="372.3" r="2.2" fill="none" stroke="#9ab8b0" stroke-width=".5" stroke-dasharray=".8 .7"/><path d="M88.4 381.4l3-2 3 2-3 2z" fill="#3a8a70"/><circle cx="91.4" cy="390.5" r="2.5" fill="#3a8a70"/><rect x="89.10000000000001" y="397.4" width="4.6" height="5.2" fill="#3a8a70"/><path d="M91.4 407.5l2.8 4.6a2.8 .9 0 0 1-5.6 0z" fill="#3a8a70"/><circle cx="89.4" cy="419.4" r=".45" fill="#9ab8b0"/><circle cx="93.4" cy="419.4" r=".45" fill="#9ab8b0"/><path d="M89.0 426.3h5v4.6" stroke="#2a7a60" stroke-width=".7" fill="none"/></svg>
<svg style="left:0px;top:0px" width="1000" height="450" viewBox="0 0 1000 450"><defs>
<linearGradient id="bg" x1="0" y1="0" x2="0" y2="1"><stop offset="0" stop-color="#13263a"/><stop offset=".5" stop-color="#4c647c"/><stop offset="1" stop-color="#88a0b7"/></linearGradient>
<linearGradient id="colf" x1="0" y1="0" x2="1" y2="0"><stop offset="0" stop-color="#f6f6f6"/><stop offset=".72" stop-color="#ffffff"/><stop offset=".9" stop-color="#e4e4e4"/><stop offset="1" stop-color="#c4c4c4"/></linearGradient>
<linearGradient id="cols" x1="0" y1="0" x2="1" y2="0"><stop offset="0" stop-color="#a0a0a0"/><stop offset="1" stop-color="#bebebe"/></linearGradient>
<linearGradient id="basef" x1="0" y1="0" x2="1" y2="0"><stop offset="0" stop-color="#d8d8d8"/><stop offset=".06" stop-color="#f4f4f4"/><stop offset="1" stop-color="#e6e6e6"/></linearGradient>
<linearGradient id="basel" x1="0" y1="0" x2="1" y2="1"><stop offset="0" stop-color="#9c9c9c"/><stop offset="1" stop-color="#b4b4b4"/></linearGradient>
<linearGradient id="legw" x1="0" y1="0" x2="1" y2="0"><stop offset="0" stop-color="#ffffff"/><stop offset="1" stop-color="#ececec"/></linearGradient>
<linearGradient id="band" x1="0" y1="1" x2="1" y2="0"><stop offset="0" stop-color="#b0b0b0"/><stop offset=".3" stop-color="#c8c8c8"/><stop offset=".55" stop-color="#f0f0f0"/><stop offset=".8" stop-color="#c4c4c4"/><stop offset="1" stop-color="#b4b4b4"/></linearGradient>
</defs><rect x="264" y="68" width="517" height="369" fill="url(#bg)"/><polygon points="370,322 370,358 447,428 447,392" fill="url(#basel)" /><path d="M447 392L550.5 366V402L450 428.4Q447 428.6 447 426Z" fill="url(#basef)"/><polygon points="348,285 458,257 560,333 552,341 551,367.4 443,395 348,311" fill="#272727" stroke="#272727" stroke-width=".6"/><polygon points="348,285 458,257 560,333 552,341 442,369" fill="#292929" /><polygon points="348,285 442,369 443,395 348,311" fill="#202020" /><polygon points="442,369 552,341 551,367.4 443,395" fill="#343434" /><circle cx="399" cy="305" r=".55" fill="#c8c8c8"/><circle cx="410" cy="316" r=".55" fill="#c8c8c8"/><circle cx="421" cy="326" r=".55" fill="#c8c8c8"/><circle cx="432" cy="336" r=".55" fill="#c8c8c8"/><circle cx="443" cy="346" r=".55" fill="#c8c8c8"/><circle cx="454" cy="355" r=".55" fill="#c8c8c8"/><circle cx="408" cy="300" r=".55" fill="#c8c8c8"/><circle cx="440" cy="322" r=".55" fill="#c8c8c8"/><circle cx="452" cy="330" r=".55" fill="#c8c8c8"/><circle cx="470" cy="332" r=".55" fill="#c8c8c8"/><circle cx="480" cy="340" r=".55" fill="#c8c8c8"/><circle cx="493" cy="344" r=".55" fill="#c8c8c8"/><circle cx="462" cy="300" r=".55" fill="#c8c8c8"/><circle cx="478" cy="296" r=".55" fill="#c8c8c8"/><circle cx="500" cy="311" r=".55" fill="#c8c8c8"/><circle cx="512" cy="318" r=".55" fill="#c8c8c8"/><circle cx="522" cy="324" r=".55" fill="#c8c8c8"/><circle cx="532" cy="334" r=".55" fill="#c8c8c8"/><circle cx="513" cy="339" r=".55" fill="#c8c8c8"/><circle cx="425" cy="294" r=".55" fill="#c8c8c8"/><circle cx="447" cy="290" r=".55" fill="#c8c8c8"/><circle cx="467" cy="286" r=".55" fill="#c8c8c8"/><circle cx="506" cy="300" r=".55" fill="#c8c8c8"/><path d="M451 257V243Q451 238 456 237L484 229V236L458 243.4Q455.4 244 455.4 247V257Z" fill="#1272b8"/><polygon points="455.4,246 461,242 461,258 455.4,257" fill="#e2e2e2" /><polygon points="472,241 482,237 481,255 472,250" fill="#0c0c0c" /><polygon points="470,250 481,254 513.3,285.6 558.6,328 553,341 516,310 495,290.6 470,262" fill="#b2b2b2" /><polygon points="472,252.4 479,252.8 539,310 555.4,325.4 554.4,332 528,310 472,257" fill="#e9e9e9" /><polygon points="479,252.8 481,254 513.3,285.6 558.6,328 556.6,329.4 535,310" fill="#c4c4c4" /><polygon points="513.3,285.6 532.8,280.2 580,322 556,329" fill="#0e0e0e" /><path d="M516.9 289.2L536.7 283.7" stroke="#262626" stroke-width=".7"/><path d="M520.4 292.8L540.7 287.2" stroke="#262626" stroke-width=".7"/><path d="M524.0 296.5L544.6 290.6" stroke="#262626" stroke-width=".7"/><path d="M527.5 300.1L548.5 294.1" stroke="#262626" stroke-width=".7"/><path d="M531.1 303.7L552.5 297.6" stroke="#262626" stroke-width=".7"/><path d="M534.6 307.3L556.4 301.1" stroke="#262626" stroke-width=".7"/><path d="M538.2 310.9L560.3 304.6" stroke="#262626" stroke-width=".7"/><path d="M541.8 314.5L564.3 308.1" stroke="#262626" stroke-width=".7"/><path d="M545.3 318.1L568.2 311.6" stroke="#262626" stroke-width=".7"/><path d="M548.9 321.8L572.1 315.0" stroke="#262626" stroke-width=".7"/><path d="M552.4 325.4L576.1 318.5" stroke="#262626" stroke-width=".7"/><polygon points="527.2,265.6 590,321 580,322.4 532.8,280.2 528.9,277.8" fill="#d4d4d4" /><path d="M554 330.4L588 320.4Q592.6 320 593.4 324.6L594.2 369.6L562 380Q556 381 553.4 374Z" fill="#0f78c6"/><path d="M554 330.4L588 320.4Q592.6 320 593.4 324.6L593.400 325.6L560 335Q555.4 335.6 554 330.4Z" fill="#2389d4"/><path d="M554 330.4Q555.4 335.6 558.4 335.4L558.400 378.6Q555 377.600 553.4 374Z" fill="#0c69b0"/><polygon points="486.4,200 499,197 509,282.6 481,254.4" fill="#b0b0b0" /><polygon points="498.8,197 520,192 522,216 529.2,277.6 509,282.6" fill="url(#legw)" /><polygon points="509,282.6 529.2,277.6 532.8,280.2 510.4,284.6" fill="#cfcfcf" /><polygon points="376,230 384,231 384,316.4 376,314.6" fill="#c2c2c2" /><polygon points="384,231 393,229 393,314.6 384,316.4" fill="#f7f7f7" /><path d="M441.4 89V186L453.4 196V98Z" fill="url(#cols)"/><polygon points="359.8,194.0 441.6,172.0 441.6,175.8 366,197.0" fill="#b6b6b6" /><polygon points="366,197.0 441.6,175.8 441.6,183.8 369.6,203.8" fill="#fbfbfb" /><polygon points="369,203.0 437,184.5 441.6,184.4 451.2,194 451.2,214 380,232.4 379.4,213" fill="#060606" /><polygon points="369.6,203.4 370.1,198.9 374.2,202.2" fill="#060606" /><polygon points="374.2,202.2 374.8,197.7 378.9,200.9" fill="#060606" /><polygon points="378.9,200.9 379.4,196.4 383.5,199.6" fill="#060606" /><polygon points="383.5,199.6 384.0,195.1 388.2,198.4" fill="#060606" /><polygon points="388.2,198.4 388.7,193.9 392.8,197.1" fill="#060606" /><polygon points="392.8,197.1 393.3,192.6 397.5,195.8" fill="#060606" /><polygon points="397.5,195.8 398.0,191.3 402.1,194.6" fill="#060606" /><polygon points="402.1,194.6 402.6,190.1 406.8,193.3" fill="#060606" /><polygon points="406.8,193.3 407.3,188.8 411.4,192.0" fill="#060606" /><polygon points="411.4,192.0 411.9,187.5 416.1,190.8" fill="#060606" /><polygon points="416.1,190.8 416.6,186.3 420.7,189.5" fill="#060606" /><polygon points="420.7,189.5 421.2,185.0 425.4,188.2" fill="#060606" /><polygon points="425.4,188.2 425.9,183.7 430.0,187.0" fill="#060606" /><polygon points="430.0,187.0 430.5,182.5 434.7,185.7" fill="#060606" /><polygon points="434.7,185.7 435.2,181.2 439.3,184.4" fill="#060606" /><path d="M384.8 209.2V231.2" stroke="#121212" stroke-width="1.4"/><path d="M389.5 207.9V229.9" stroke="#121212" stroke-width="1.4"/><path d="M394.2 206.7V228.7" stroke="#121212" stroke-width="1.4"/><path d="M399.0 205.5V227.5" stroke="#121212" stroke-width="1.4"/><path d="M403.8 204.3V226.3" stroke="#121212" stroke-width="1.4"/><path d="M408.5 203.0V225.0" stroke="#121212" stroke-width="1.4"/><path d="M413.2 201.8V223.8" stroke="#121212" stroke-width="1.4"/><path d="M418.0 200.6V222.6" stroke="#121212" stroke-width="1.4"/><path d="M422.8 199.4V221.4" stroke="#121212" stroke-width="1.4"/><path d="M427.5 198.1V220.1" stroke="#121212" stroke-width="1.4"/><path d="M432.2 196.9V218.9" stroke="#121212" stroke-width="1.4"/><path d="M437.0 195.7V217.7" stroke="#121212" stroke-width="1.4"/><path d="M441.8 194.4V216.4" stroke="#121212" stroke-width="1.4"/><path d="M446.5 193.2V215.2" stroke="#121212" stroke-width="1.4"/><polygon points="381,231.9 383.4,231.3 383.4,233.0" fill="#e8e8e8" /><polygon points="385.8,230.7 388.1,230.1 388.1,231.8" fill="#e8e8e8" /><polygon points="390.5,229.5 392.9,228.9 392.9,230.6" fill="#e8e8e8" /><polygon points="395.2,228.3 397.6,227.7 397.6,229.4" fill="#e8e8e8" /><polygon points="400.0,227.0 402.4,226.4 402.4,228.1" fill="#e8e8e8" /><polygon points="404.8,225.8 407.1,225.2 407.1,226.9" fill="#e8e8e8" /><polygon points="409.5,224.6 411.9,224.0 411.9,225.7" fill="#e8e8e8" /><polygon points="414.2,223.3 416.6,222.7 416.6,224.4" fill="#e8e8e8" /><polygon points="419.0,222.1 421.4,221.5 421.4,223.2" fill="#e8e8e8" /><polygon points="423.8,220.9 426.1,220.3 426.1,222.0" fill="#e8e8e8" /><polygon points="428.5,219.7 430.9,219.1 430.9,220.8" fill="#e8e8e8" /><polygon points="433.2,218.4 435.6,217.8 435.6,219.5" fill="#e8e8e8" /><polygon points="438.0,217.2 440.4,216.6 440.4,218.3" fill="#e8e8e8" /><polygon points="442.8,216.0 445.1,215.4 445.1,217.1" fill="#e8e8e8" /><polygon points="447.5,214.8 449.9,214.2 449.9,215.9" fill="#e8e8e8" /><path d="M355 196.4Q355.2 194.6 358.6 194L360.4 194L366 198.4L379.6 212.8V233.8L375.4 233.6Q362 228 356.8 218Z" fill="#1878c2"/><path d="M366 198.4L379.6 212.8V233.8L376.4 233.7V214.8Z" fill="#2e93dc"/><polygon points="483.6,159.6 502.4,155.6 505,158.2 483.6,163.2" fill="#b6b6b6" /><polygon points="483.6,163.2 497.4,160.0 497.4,167.0 483.6,170.8" fill="#fbfbfb" /><polygon points="497,160.3 505,158.2 509,162 500,169" fill="#1a8ada" /><polygon points="483.6,169.6 496,166.6 499,163.4 506,162.2 521.6,175 521.4,194.8 483.6,203.8" fill="#060606" /><polygon points="483.6,170.2 484.1,165.8 488.2,169.1" fill="#060606" /><polygon points="488.2,169.1 488.8,164.7 492.9,168.1" fill="#060606" /><polygon points="492.9,168.1 493.4,163.7 497.5,167.0" fill="#060606" /><polygon points="497.6,166.4 498.2,161.8 501.4,165 501.8,160.4 505.4,163.4" fill="#060606" /><path d="M488.4 178.7V202.7" stroke="#121212" stroke-width="1.4"/><path d="M493.1 177.5V201.5" stroke="#121212" stroke-width="1.4"/><path d="M497.9 176.4V200.4" stroke="#121212" stroke-width="1.4"/><path d="M502.6 175.3V199.3" stroke="#121212" stroke-width="1.4"/><path d="M507.4 174.1V198.1" stroke="#121212" stroke-width="1.4"/><path d="M512.1 173.0V197.0" stroke="#121212" stroke-width="1.4"/><path d="M516.9 171.9V195.9" stroke="#121212" stroke-width="1.4"/><path d="M502.4 155.6Q503.6 154.4 505.2 155.4L523.6 171.8Q525 173.2 525 175.8V195.6L521.3 196.4V175.2L506 162.2L502.6 158Z" fill="#1677c2"/><path d="M452.6 97V221Q453 227.6 468 227.8Q483.4 227.4 483.6 221V95Z" fill="url(#colf)"/><path d="M441.4 90.6Q441.6 85 449 82.6Q457 80.6 463.6 83L479.6 91.4Q484 94.4 483.4 98Q482.4 103 473 104.8Q464 106 458 103.4L445 96Q441.2 93.6 441.4 90.6Z" fill="#9b9b9b"/><text transform="translate(476.8 164.4) rotate(-90)" font-size="11.6" text-anchor="middle" fill="#7c7c7c" stroke="#7c7c7c" stroke-width=".15" font-family="Liberation Sans,sans-serif">Spectra</text><text x="469.6" y="224.6" font-size="4.6" text-anchor="middle" fill="#8a8a8a" font-family="Liberation Sans,sans-serif" letter-spacing=".3" transform="rotate(-4 469.6 224.6)">AVALON</text><text x="512" y="221" font-size="3.4" text-anchor="middle" fill="#b0b0b0" font-family="Liberation Sans,sans-serif" transform="rotate(-6 512 221)">SPECTRA</text><polygon points="461,227.4 464.6,227.6 464.6,258.6 461,258" fill="#6e6e6e" /><polygon points="464.6,227.6 472.4,227.4 472.4,258 464.6,258.6" fill="#989898" /><path d="M462.4 258H472.8V268.6L470.8 271.4V276.4Q469.6 278.6 467.6 278.6Q465.6 278.6 464.6 276.4V271.4L462.4 268.6Z" fill="#0a0a0a"/><path d="M464.8 262v5M470.4 263v4" stroke="#3a3a3a" stroke-width=".7"/><path d="M467.400 268.400v4.200M469 269v3" stroke="#b8b8b8" stroke-width=".6"/><path d="M461.8 268.600l1.200 2M473.400 268.600l-1.200 2" stroke="#0a0a0a" stroke-width="1.200"/><rect x="469.4" y="260" width="1.8" height="1.2" fill="#3ad04a"/><path d="M467.6 278V285" stroke="#8a8a8a" stroke-width=".6"/><circle cx="467.6" cy="285.6" r=".7" fill="#e04a4a"/><path d="M427 303.6Q426.4 298 431 296.2Q436 294.8 439.6 298.6Q442.6 301.6 443.4 305.4Q440 309 434 309.6Q429 308.6 427 303.6Z" fill="#f0a818"/><path d="M429 304.6Q435 305.4 441 301.4Q442.8 303.2 443.4 305.4Q440 309 434 309.6Q430.4 308.4 429 304.6Z" fill="#c4860c"/><path d="M432 312.4Q436 310 441.6 310.6Q447 313 451.8 317.8Q449 319.4 444 318.6Q436 316.8 432 312.4Z" fill="#eea416"/><path d="M435 313.6Q442 313.2 450 317.2L451.8 317.8Q449 319.4 444 318.6Q438 317 435 313.6Z" fill="#b87a0a"/><path d="M448 306.6Q458 302.6 467 304Q464 307.4 456 308.2L449.6 308.8Z" fill="#eda416"/><path d="M441 304.6L448.4 306.2L449.6 309.4L444.6 311.6L440.6 309.6Z" fill="#7a520a"/><polygon points="460,320.4 465.8,320.2 465.6,340.4 460.6,341" fill="#c9c9c9" /><polygon points="462.8,320.3 465.8,320.2 465.6,340.4 463,340.6" fill="#141414" /><rect x="462.6" y="328" width="1.6" height="3" fill="#f0f0f0"/><path d="M459.4 342.4L466.4 341.2" stroke="#e8e8e8" stroke-width="1.3"/><path d="M480 299.6Q479.6 295 484 294.6Q488.4 295 488.2 299.6L497.4 317.8L508.6 321L511.4 329.8L481 336.8L474.4 333.2L474.4 324.6Z" fill="#b4b4cc"/><path d="M483 301L485.6 301L489 318L480 323Z" fill="#3c3c52"/><path d="M487.6 301.6L495.6 318.6L492 320.2Z" fill="#565670"/><path d="M475.4 323L479.6 305L480.6 322.6L477.6 325Z" fill="#ececf6"/><path d="M474.4 324.8L481 328V336.8L474.4 333.2Z" fill="#54546e"/><path d="M481 328L497 319.6L508.6 321L511.4 329.8L481 336.8Z" fill="#cfcfe2"/><path d="M484 329.4l4-1.4v4.6l-4 1zM491 326.6l4.4-1.8v4.8l-4.400 1.400zM498.600 324.600l3.400-.6.600 4-3.400 1z" fill="#484862"/><circle cx="506" cy="325.600" r="2.100" fill="#5c5c78"/><circle cx="506" cy="325.600" r=".9" fill="#d8d8e8"/><path d="M497 319.600L508.600 321L506 317.400L499 316.600Z" fill="#dcdcee"/><circle cx="484" cy="297.600" r="1.300" fill="#33333f"/><text x="766.6" y="427.2" font-size="5.9" text-anchor="end" fill="#fff" font-weight="bold" font-family="Liberation Sans,sans-serif">367.395 mm</text><path d="M770.4 422V433" stroke="#fff" stroke-width=".8"/><path d="M285 388Q290 383 298 382.4L309 384.4Q316 386 318.6 392L319 412Q317 416 312 417.6L299 421.4Q293 421.6 288 418L283.4 413Q282.4 410 282.6 394Z" fill="#c0c0c0"/><path d="M288 390Q292 385.6 298 385L308 386.6Q313.6 388 315 391L302 396.6Q298 397.4 294 395.6Z" fill="#e0e0e0"/><path d="M284.4 395.4L293.4 399.4V416.6L285 410.8Z" fill="#d6d6d6"/><path d="M297.2 399.6L317 394V412.6L297.6 418.6Z" fill="#dcdcdc"/><rect x="286.6" y="400.6" width="4.4" height="6.6" fill="#111" transform="skewY(20) translate(0 -105.2)"/><text x="306.6" y="409.6" font-size="4.4" text-anchor="middle" fill="#777" font-family="Liberation Sans,sans-serif" transform="rotate(-16 306.6 409.6)">Front</text><text x="301.6" y="391.6" font-size="3.6" text-anchor="middle" fill="#555" font-family="Liberation Sans,sans-serif" transform="rotate(-12 301.6 391.6)">Top</text><path d="M294.4 424.2V393" stroke="#1030e0" stroke-width="1.1"/><circle cx="294.4" cy="398.6" r="1" fill="#1030e0"/><path d="M294.4 424.2L323 416.8" stroke="#e02020" stroke-width="1.1"/><path d="M294.4 424.2L279.4 410.8" stroke="#20a030" stroke-width="1.1"/><text x="294.2" y="393" font-size="5.6" font-weight="bold" text-anchor="middle" fill="#1030e0" font-family="Liberation Sans,sans-serif">Z</text><text x="327" y="417.8" font-size="6" font-weight="bold" text-anchor="middle" fill="#e02020" font-family="Liberation Sans,sans-serif">X</text><text x="276.4" y="410" font-size="5.6" font-weight="bold" text-anchor="middle" fill="#20a030" font-family="Liberation Sans,sans-serif">Y</text><rect x="267.3" y="404.4" width="6.4" height="19.8" rx="3.2" fill="#e4e9f0"/><path d="M270.5 407.6v5.4M270.5 415.4v5.6M269.3 409l1.2-1.6 1.2 1.6M269.3 419.6l1.2 1.6 1.2-1.6" stroke="#3b6db5" stroke-width=".6" fill="none"/><circle cx="270.4" cy="431" r="2.9" fill="#e4e9f0"/><circle cx="270.4" cy="431" r="1.4" fill="none" stroke="#3b6db5" stroke-width=".6"/><rect x="277.4" y="428.2" width="19.6" height="5.8" rx="2.9" fill="#e4e9f0"/><path d="M281 431.1h12.6" stroke="#3b6db5" stroke-width=".6" stroke-dasharray="2.4 1.4"/></svg>
<div class="l" style="left:784.6px;top:76.2px;font-size:8px;color:#4a4a4a;">Device Manager</div>
<svg style="left:0px;top:0px" width="1000" height="100" viewBox="0 0 1000 100"><path d="M901 73.6l1.2 2.6M900.4 75.2h2.4" stroke="#777" stroke-width=".5"/><path d="M907.4 74.4l1.8 1.8M909.2 74.4l-1.8 1.8" stroke="#777" stroke-width=".5"/></svg>
<svg style="left:0px;top:0px" width="1000" height="110" viewBox="0 0 1000 110"><path d="M788 85.4l1.6 1-1.6 1M788 90.6l1.6 1-1.6 1" stroke="#8a8a8a" stroke-width=".45" fill="none"/><path d="M788 96.0l1.6 1-1.6 1M788 101.19999999999999l1.6 1-1.6 1" stroke="#8a8a8a" stroke-width=".45" fill="none"/><path d="M797.2 87.2a2.4 2.4 0 1 0 2.2 1.2M798 86l1.8 1-1.4 1.4" fill="none" stroke="#222" stroke-width=".7"/><rect x="804.6" y="88" width="4.8" height="3.4" fill="#3f78b8"/><rect x="805.8" y="86.6" width="2.4" height="1.6" fill="#e8b13a"/><rect x="806" y="89.4" width="2" height="1.6" fill="#fff"/><path d="M813.6 86.4h4M813.6 86.4v5.2M813.6 91.6h1.4" fill="none" stroke="#3b6db5" stroke-width=".8"/><rect x="823" y="86.6" width="4.8" height="4.8" fill="#d9822b"/><rect x="824.4" y="88" width="2" height="2" fill="#f3c08a"/><path d="M822 89h1M827.8 89h1" stroke="#a85a1a" stroke-width=".8"/><path d="M832.4 86.8h5.2M835 86.8v4.6M833.4 91.4h3.2" stroke="#222" stroke-width=".8" fill="none"/><path d="M831.4 93h8.2" stroke="#3a8ae0" stroke-width=".7"/><path d="M845.6 85.6v4.6" stroke="#666" stroke-width=".8"/><circle cx="845.6" cy="91" r="1.1" fill="#d9482b"/><path d="M847.4 91.4l2-1" stroke="#8a8" stroke-width=".5"/><rect x="853.6" y="86.8" width="5.2" height="4.6" fill="#9a9a9a"/><rect x="854.8" y="88" width="2.6" height="2" fill="#5a6a8a"/><path d="M865 85.8v5.6" stroke="#d9482b" stroke-width=".8"/><rect x="866.6" y="89.2" width="2.6" height="2.4" fill="none" stroke="#d9822b" stroke-width=".7"/><path d="M872.6 88.6l3-1.4 3 1.4-3 1.4z" fill="#222"/><path d="M874 90v1.6c1 .8 2.4.8 3.4 0v-1.6" fill="#333"/><path d="M872.8 86v1.8M871.9 86.9h1.8" stroke="#2e8b57" stroke-width=".5"/><circle cx="873.4" cy="91.4" r=".6" fill="#d9482b"/><circle cx="799" cy="99.8" r="2" fill="#c8783a"/><circle cx="801" cy="100.6" r="1.5" fill="#5a5a6a"/><rect x="804.6" y="97.39999999999999" width="4.8" height="4.8" fill="#d9482b"/><rect x="805.8" y="98.6" width="2.4" height="2.4" fill="#222"/><circle cx="816.6" cy="99.8" r="2.3" fill="#c0392b"/><circle cx="816.6" cy="99.8" r="1" fill="#222"/><path d="M824.4 100.8l2.4-2.2" stroke="#c0392b" stroke-width="1.6"/><path d="M833.4 97.0v5M836 99.2v3M838 99.2v3" stroke="#d9482b" stroke-width=".8"/><path d="M836 99.39999999999999v2.8M838 99.8v2.4" stroke="#3b6db5" stroke-width=".5"/><rect x="843" y="97.39999999999999" width="3" height="3" fill="none" stroke="#c0392b" stroke-width=".7"/><rect x="845" y="99.2" width="3" height="3" fill="none" stroke="#c0392b" stroke-width=".7"/><circle cx="854.4" cy="99.8" r="1.8" fill="none" stroke="#c0392b" stroke-width=".8"/><path d="M854.4 98.8v1h.8" stroke="#3b6db5" stroke-width=".4" fill="none"/><path d="M860.8 99.2h6l-.8 2h-4.4z" fill="#555"/><path d="M861.4 98.39999999999999h4.6" stroke="#888" stroke-width=".5"/><path d="M871.4 97.39999999999999v5M871.4 97.39999999999999l2.6 4.6v-4.6" stroke="#d9822b" stroke-width=".8" fill="none"/><rect x="874.6" y="99.8" width="2" height="2.4" fill="#e8b13a"/><path d="M880.4 97.6h4.4M882.6 97.6v4.8" stroke="#c0502b" stroke-width="1"/><rect x="884.6" y="99.8" width="2" height="2.4" fill="#e8b13a"/><path d="M889.4 97.6h5.2M889.4 99.2h5.2" stroke="#6a7a9a" stroke-width=".8"/><path d="M892 99.8l2.4 2.6" stroke="#c0392b" stroke-width=".8"/><rect x="893.2" y="100.2" width="1.8" height="2" fill="#3a9a5a"/></svg>
<div class="a" style="left:784.2px;top:108px;width:127.6px;height:184px;background:#f0f0f0;border:.8px solid #bdbdbd;box-sizing:border-box;box-shadow:inset 0 0 0 .8px #fff;"></div>
<div class="a" style="left:785px;top:108.8px;width:126px;height:20.2px;background:#fff;"></div>
<div class="l" style="left:787.6px;top:115.8px;font-size:4.7px;color:#b09aa4;">I++ CMM Controls1</div>
<div class="l" style="left:788px;top:126.6px;font-size:4.7px;color:#5a9ad0;">Options</div>
<div class="l" style="left:790px;top:134.8px;font-size:6.15px;color:#101018;">Position -</div>
<div class="a" style="left:814.6px;top:131.4px;width:0.6px;height:7.4px;background:#999;"></div>
<div class="a" style="left:829.6px;top:131.4px;width:0.6px;height:7.4px;background:#999;"></div>
<div class="l" style="left:818.6px;top:134.9px;font-size:6px;color:#111;">IN</div>
<div class="l" style="left:793.2px;top:145.0px;font-size:6.15px;color:#1a1030;">X:</div>
<div class="a" style="left:804.4px;top:140.7px;width:40px;height:9px;background:#f0f0f0;border-top:.8px solid #8a8a8a;border-left:.8px solid #8a8a8a;border-bottom:.6px solid #fff;box-sizing:border-box;"></div>
<div class="r" style="left:843px;top:145.0px;font-size:6.15px;color:#14143a;">-4.0000</div>
<div class="l" style="left:793.2px;top:155.4px;font-size:6.15px;color:#1a1030;">Y:</div>
<div class="a" style="left:804.4px;top:151.1px;width:40px;height:9px;background:#f0f0f0;border-top:.8px solid #8a8a8a;border-left:.8px solid #8a8a8a;border-bottom:.6px solid #fff;box-sizing:border-box;"></div>
<div class="r" style="left:843px;top:155.4px;font-size:6.15px;color:#14143a;">6.0000</div>
<div class="l" style="left:793.2px;top:166.2px;font-size:6.15px;color:#1a1030;">Z:</div>
<div class="a" style="left:804.4px;top:161.89999999999998px;width:40px;height:9px;background:#f0f0f0;border-top:.8px solid #8a8a8a;border-left:.8px solid #8a8a8a;border-bottom:.6px solid #fff;box-sizing:border-box;"></div>
<div class="r" style="left:843px;top:166.2px;font-size:6.15px;color:#14143a;">13.3709</div>
<div class="l" style="left:793.2px;top:176.2px;font-size:6.15px;color:#1a1030;">A:</div>
<div class="a" style="left:804.4px;top:171.89999999999998px;width:40px;height:9px;background:#f0f0f0;border-top:.8px solid #8a8a8a;border-left:.8px solid #8a8a8a;border-bottom:.6px solid #fff;box-sizing:border-box;"></div>
<div class="r" style="left:843px;top:176.2px;font-size:6.15px;color:#14143a;">0.00</div>
<div class="l" style="left:793.2px;top:186.4px;font-size:6.15px;color:#1a1030;">B:</div>
<div class="a" style="left:804.4px;top:182.1px;width:40px;height:9px;background:#f0f0f0;border-top:.8px solid #8a8a8a;border-left:.8px solid #8a8a8a;border-bottom:.6px solid #fff;box-sizing:border-box;"></div>
<div class="r" style="left:843px;top:186.4px;font-size:6.15px;color:#14143a;">0.00</div>
<div class="a" style="left:852px;top:137px;width:17px;height:15.6px;background:#e2e2e2;border:.7px solid #c4c4c4;box-sizing:border-box;"></div>
<div class="a" style="left:852px;top:156px;width:17px;height:16.6px;background:#e2e2e2;border:.7px solid #c4c4c4;box-sizing:border-box;"></div>
<div class="a" style="left:880px;top:133.8px;width:26.8px;height:22.8px;background:#cce4f7;border-right:1px solid #2a70b8;border-bottom:1px solid #2a70b8;border-top:.5px solid #e8f2fb;border-left:.5px solid #e8f2fb;box-sizing:border-box;"></div>
<div class="t" style="left:893.4px;top:141.6px;font-size:6.15px;color:#1a2a4a;">Disable</div>
<div class="t" style="left:893.4px;top:149.0px;font-size:6.15px;color:#1a2a4a;">User</div>
<div class="a" style="left:880px;top:160.4px;width:27px;height:23px;background:#fff;"></div>
<div class="a" style="left:880px;top:187.2px;width:26.8px;height:22.4px;background:#e4e4e4;border:.7px solid #d0d0d0;box-sizing:border-box;"></div>
<div class="a" style="left:788.4px;top:193.79999999999998px;width:5.4px;height:5.4px;background:#fff;border:.5px solid #d0d0d0;box-sizing:border-box;"></div>
<div class="l" style="left:796.4px;top:196.7px;font-size:6.15px;color:#0c0c2a;">Enable Controls</div>
<div class="a" style="left:788.4px;top:203.39999999999998px;width:5.4px;height:5.4px;background:#fff;border:.5px solid #d0d0d0;box-sizing:border-box;"></div>
<div class="l" style="left:796.4px;top:206.3px;font-size:6.15px;color:#0c0c2a;">Rotate Probe Head</div>
<div class="a" style="left:788.4px;top:212.79999999999998px;width:5.4px;height:5.4px;background:#fff;border:.5px solid #d0d0d0;box-sizing:border-box;"></div>
<div class="l" style="left:796.4px;top:215.7px;font-size:6.15px;color:#0c0c2a;">Trigger</div>
<div class="a" style="left:854px;top:196px;width:19.8px;height:9.4px;background:#e2e2e2;border:.7px solid #c4c4c4;box-sizing:border-box;"></div>
<div class="t" style="left:863.9px;top:200.8px;font-size:6.15px;color:#1a2a5a;">x 0.05</div>
<div class="a" style="left:821.2px;top:213.2px;width:15.799999999999955px;height:14.0px;background:#e4e4e4;border-bottom:.8px solid #a8a8a8;border-right:.6px solid #c8c8c8;border-top:.5px solid #d8d8d8;box-sizing:border-box;"></div>
<div class="a" style="left:804px;top:222px;width:14.799999999999955px;height:14.400000000000006px;background:#e4e4e4;border-bottom:.8px solid #a8a8a8;border-right:.6px solid #c8c8c8;border-top:.5px solid #d8d8d8;box-sizing:border-box;"></div>
<div class="a" style="left:838.4px;top:222px;width:14.600000000000023px;height:14.400000000000006px;background:#e4e4e4;border-bottom:.8px solid #a8a8a8;border-right:.6px solid #c8c8c8;border-top:.5px solid #d8d8d8;box-sizing:border-box;"></div>
<div class="a" style="left:821.2px;top:230.8px;width:15.799999999999955px;height:14.0px;background:#e4e4e4;border-bottom:.8px solid #a8a8a8;border-right:.6px solid #c8c8c8;border-top:.5px solid #d8d8d8;box-sizing:border-box;"></div>
<div class="a" style="left:857.2px;top:212px;width:14.799999999999955px;height:14.400000000000006px;background:#e4e4e4;border-bottom:.8px solid #a8a8a8;border-right:.6px solid #c8c8c8;border-top:.5px solid #d8d8d8;box-sizing:border-box;"></div>
<div class="a" style="left:857.2px;top:230.2px;width:14.799999999999955px;height:13.600000000000023px;background:#e4e4e4;border-bottom:.8px solid #a8a8a8;border-right:.6px solid #c8c8c8;border-top:.5px solid #d8d8d8;box-sizing:border-box;"></div>
<div class="l" style="left:790.6px;top:252.2px;font-size:6.15px;color:#1a1020;">Tool:</div>
<div class="l" style="left:809.2px;top:252.2px;font-size:6.15px;color:#10103a;">New_Probe:1.11.8.A0.0 B0.0</div>
<div class="a" style="left:790px;top:258.8px;width:15.6px;height:13.8px;background:#e2e2e2;border:.7px solid #c4c4c4;box-sizing:border-box;"></div>
<div class="l" style="left:809.6px;top:266.6px;font-size:6.15px;color:#0c0c2a;">Probe Rad: 0.0575 IN</div>
<div class="a" style="left:894px;top:261.2px;width:13px;height:10.2px;background:#e2e2e2;border:.7px solid #c4c4c4;box-sizing:border-box;"></div>
<div class="t" style="left:900.5px;top:266.2px;font-size:6.15px;color:#1a2a5a;">&gt;&gt;</div>
<div class="l" style="left:788.8px;top:280.7px;font-size:6.15px;color:#0c0c2a;">VDI Ver. 3.17.24</div>
<div class="a" style="left:882px;top:275px;width:25px;height:10.8px;background:#e2e2e2;border:.7px solid #c4c4c4;box-sizing:border-box;"></div>
<div class="t" style="left:894.5px;top:280.5px;font-size:6.15px;color:#222;">OK</div>
<svg style="left:0px;top:0px" width="1000" height="450" viewBox="0 0 1000 450"><circle cx="860" cy="145" r="3.4" fill="#8ac0e8"/><path d="M857 144.6l3-3 3 2z" fill="#e8a860"/><path d="M858.4 145h3.6v3h-3.6z" fill="#f4f4f4"/><path d="M862 143.4v4.4" stroke="#5a8ac0" stroke-width=".8"/><circle cx="858.6" cy="165.8" r="2.6" fill="#e01020"/><path d="M858.6 160v4" stroke="#222" stroke-width=".8"/><circle cx="862.4" cy="165" r="2.2" fill="#a8c8e8"/><path d="M861 162l1.6-2.4 1 2.8" fill="#e8a860"/><g fill="none" stroke="#1e9a2e" stroke-width="1.7" stroke-linejoin="round"><path d="M890.6 170.4l2.6-4.2h1.8l1.6 2.6"/><path d="M898 170.6l1.6 2.8-1 1.8h-3"/><path d="M892.6 175.2h-3l-1-1.8 1.6-2.6"/></g><path d="M895.6 167.4l2.8.6-1 2.6zM896.4 173.4l-1.6 2 1.8 1.6zM887.8 171.2l2.6-1 .6 2.6z" fill="#1e9a2e"/><circle cx="893.4" cy="198.4" r="4.9" fill="#fff" stroke="#e01020" stroke-width="1.5"/><path d="M890 202l6.8-7.2" stroke="#7a0a14" stroke-width="1.3"/><path d="M789.6 196.6l1.2 1.2 2-2.6" stroke="#444" stroke-width=".6" fill="none"/><circle cx="829" cy="220.2" r="4.8" fill="#2fb52a"/><circle cx="828.4" cy="219.2" r="3.4" fill="#8be06a" opacity=".45"/><path d="M827.3 221.9L830.7 218.5M830.6 221.2L830.7 218.5L828.0 218.6" stroke="#fff" stroke-width="1.1" fill="none"/><circle cx="811.6" cy="228.9" r="4.8" fill="#2fb52a"/><circle cx="811.0" cy="227.9" r="3.4" fill="#8be06a" opacity=".45"/><path d="M814.0 228.9L809.2 228.9M811.2 227.1L809.2 228.9L811.2 230.7" stroke="#fff" stroke-width="1.1" fill="none"/><circle cx="845.3" cy="228.9" r="4.8" fill="#2fb52a"/><circle cx="844.6999999999999" cy="227.9" r="3.4" fill="#8be06a" opacity=".45"/><path d="M842.9 228.9L847.7 228.9M845.7 230.7L847.7 228.9L845.7 227.1" stroke="#fff" stroke-width="1.1" fill="none"/><circle cx="829" cy="237.8" r="4.8" fill="#2fb52a"/><circle cx="828.4" cy="236.8" r="3.4" fill="#8be06a" opacity=".45"/><path d="M830.7 236.1L827.3 239.5M827.4 236.8L827.3 239.5L830.0 239.4" stroke="#fff" stroke-width="1.1" fill="none"/><circle cx="864.5" cy="219.2" r="4.8" fill="#1a78d0"/><circle cx="863.9" cy="218.2" r="3.4" fill="#8ac4f0" opacity=".45"/><path d="M864.5 221.6L864.5 216.8M866.3 218.8L864.5 216.8L862.7 218.8" stroke="#fff" stroke-width="1.1" fill="none"/><circle cx="864.5" cy="237" r="4.8" fill="#1a78d0"/><circle cx="863.9" cy="236" r="3.4" fill="#8ac4f0" opacity=".45"/><path d="M864.5 234.6L864.5 239.4M862.7 237.4L864.5 239.4L866.3 237.4" stroke="#fff" stroke-width="1.1" fill="none"/><path d="M901 226.4l-.4 4" stroke="#222" stroke-width=".8"/><path d="M900.7 229.4l-.5 3.6" stroke="#e01020" stroke-width="1.5"/><path d="M902.2 227.4h1.2" stroke="#888" stroke-width=".4"/><path d="M883.6 240l.8 1.4.8-1.4" stroke="#3a5ad0" stroke-width=".5" fill="none"/><path d="M797.8 260.2v5" stroke="#111" stroke-width="1.2"/><circle cx="797.8" cy="267.4" r="2.9" fill="#e01020"/></svg>
<div class="a" style="left:912.2px;top:194px;width:0.8px;height:18px;background:#555;"></div>
<div class="a" style="left:783.4px;top:292.4px;width:129px;height:10.4px;background:#f3f3f5;"></div>
<div class="l" style="left:786px;top:298.9px;font-size:4.7px;color:#2a3a7a;">Device1</div>
<div class="a" style="left:806.4px;top:294.6px;width:0.5px;height:7px;background:#e8e0a0;"></div>
<div class="l" style="left:809px;top:298.9px;font-size:4.7px;color:#34509a;">I++ CMM Functions</div>
<svg style="left:0px;top:0px" width="1000" height="450" viewBox="0 0 1000 450"><path d="M858 297.4l1.3 1.6 1.3-1.6" stroke="#999" stroke-width=".45" fill="none"/><path d="M864 299l1.3-1.6 1.3 1.6" stroke="#999" stroke-width=".45" fill="none"/><path d="M870 297.4l1.3 1.6 1.3-1.6" stroke="#999" stroke-width=".45" fill="none"/><path d="M876 299l1.3-1.6 1.3 1.6" stroke="#999" stroke-width=".45" fill="none"/><path d="M882 297.4l1.3 1.6 1.3-1.6" stroke="#999" stroke-width=".45" fill="none"/><path d="M888 299l1.3-1.6 1.3 1.6" stroke="#999" stroke-width=".45" fill="none"/><path d="M894 297.4l1.3 1.6 1.3-1.6" stroke="#999" stroke-width=".45" fill="none"/><path d="M900 299l1.3-1.6 1.3 1.6" stroke="#999" stroke-width=".45" fill="none"/><path d="M906.6 296.8l2.8 3M909.4 296.8l-2.8 3" stroke="#444" stroke-width=".6"/></svg>
<div class="a" style="left:783.4px;top:302.8px;width:129px;height:10.6px;background:#fff;"></div>
<div class="l" style="left:787.6px;top:308.2px;font-size:4.2px;color:#8a2a3a;">FEATURE 5</div>
<div class="l" style="left:818.8px;top:308.2px;font-size:4.2px;color:#4a8ad8;">CUSTOM</div>
<div class="l" style="left:847.6px;top:308.2px;font-size:4.2px;color:#8a2a3a;">REL</div>
<div class="a" style="left:783px;top:313.2px;width:130px;height:124px;background:#000;"></div>
<div class="a" style="left:786.4px;top:313.8px;font-size:26.05px;line-height:28px;font-weight:bold;color:#fff;letter-spacing:-.02px;">X:101.600</div>
<div class="a" style="left:786.4px;top:344.95px;font-size:26.05px;line-height:28px;font-weight:bold;color:#fff;letter-spacing:-.02px;">Y:153.670</div>
<div class="a" style="left:786.4px;top:376.1px;font-size:26.05px;line-height:28px;font-weight:bold;color:#fff;letter-spacing:-.02px;">Z:339.824</div>
<div class="r" style="left:911.6px;top:433.6px;font-size:5.6px;color:#fff;font-weight:bold;">mm</div>
<div class="a" style="left:86px;top:437px;width:826.6px;height:11px;background:#2b579e;"></div>
<div class="a" style="left:86px;top:448px;width:826.6px;height:2px;background:#0a0a0a;"></div>
<div class="a" style="left:107px;top:448px;width:124px;height:2px;background:#5a5a5a;"></div>
<div class="a" style="left:380px;top:448px;width:21px;height:2px;background:#d9731a;"></div>
<div class="a" style="left:401px;top:448px;width:21px;height:2px;background:#4a4a4a;"></div>
<div class="l" style="left:481px;top:443.5px;font-size:4.4px;color:#fff;">SECTION VIEW: OFF</div>
<div class="l" style="left:533px;top:443.5px;font-size:4.4px;color:#fff;">SELECTED ENTITIES: 0</div>
<div class="l" style="left:609px;top:443.5px;font-size:4.4px;color:#fff;">X:</div>
<div class="l" style="left:617px;top:443.5px;font-size:4.4px;color:#fff;">303.96904</div>
<div class="l" style="left:649px;top:443.5px;font-size:4.4px;color:#fff;">Y:</div>
<div class="l" style="left:657px;top:443.5px;font-size:4.4px;color:#fff;">4975.67301</div>
<div class="l" style="left:686px;top:443.5px;font-size:4.4px;color:#fff;">Z:</div>
<div class="l" style="left:694.4px;top:443.5px;font-size:4.4px;color:#fff;">0.00000</div>
<div class="l" style="left:722px;top:443.5px;font-size:4.4px;color:#fff;">3D</div>
<div class="l" style="left:734px;top:443.5px;font-size:4.4px;color:#fff;">CPLANE: Top</div>
<div class="l" style="left:772px;top:443.5px;font-size:4.4px;color:#fff;">TPLANE: Top</div>
<div class="l" style="left:809px;top:443.5px;font-size:4.4px;color:#fff;">WCS: Top</div>
<svg style="left:0px;top:0px" width="1000" height="450" viewBox="0 0 1000 450"><path d="M715 442.4l1 1.2 1-1.2" stroke="#9ab" stroke-width=".45" fill="none"/><path d="M765 442.4l1 1.2 1-1.2" stroke="#9ab" stroke-width=".45" fill="none"/><path d="M802.6 442.4l1 1.2 1-1.2" stroke="#9ab" stroke-width=".45" fill="none"/><path d="M836 442.4l1 1.2 1-1.2" stroke="#9ab" stroke-width=".45" fill="none"/><circle cx="846.6" cy="442.6" r="2.4" fill="none" stroke="#fff" stroke-width="1" stroke-dasharray="2.6 1.2"/><circle cx="858.6" cy="442.6" r="2.5" fill="none" stroke="#e8e8f0" stroke-width=".9"/><path d="M858.6 440.8v1.8h1.4" stroke="#e8e8f0" stroke-width=".5" fill="none"/><circle cx="870.6" cy="442.6" r="2.5" fill="none" stroke="#c8d0e0" stroke-width=".9"/><path d="M869.4 443.8l2.4-2.4" stroke="#c8d0e0" stroke-width=".5"/><rect x="879" y="438.4" width="8.4" height="8.4" fill="#3f6fc0"/><circle cx="883.2" cy="442.6" r="2.7" fill="#f0f0f0"/><circle cx="895" cy="442.6" r="2.7" fill="#d8d8d8"/><circle cx="906.4" cy="442.6" r="2.7" fill="#c4c4c4"/><path d="M905 444l2.6-2.8" stroke="#888" stroke-width=".5"/></svg>
</body></html>
